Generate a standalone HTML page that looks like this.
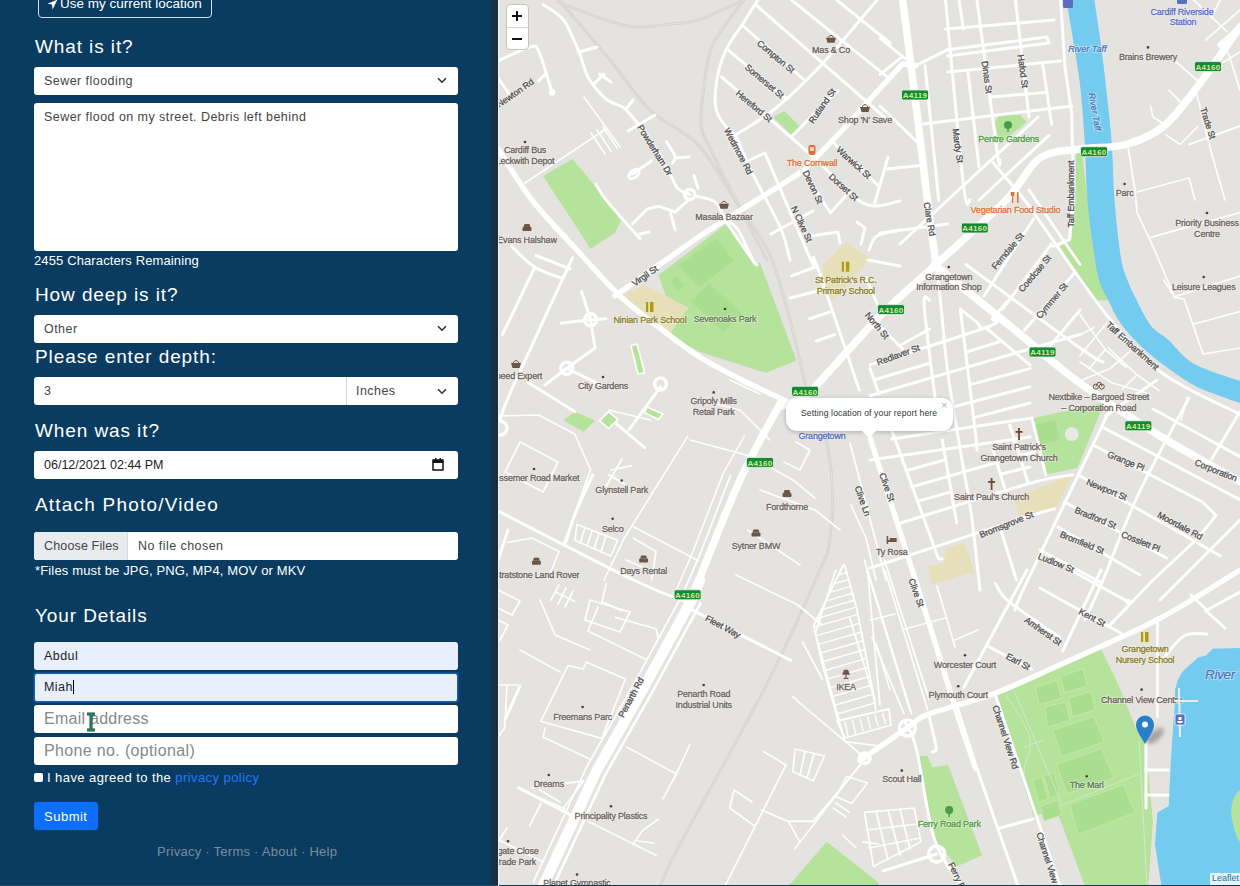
<!DOCTYPE html>
<html><head><meta charset="utf-8">
<style>
html,body{margin:0;padding:0;width:1240px;height:886px;overflow:hidden;background:#093c60;font-family:"Liberation Sans",sans-serif;}
#panel{position:absolute;left:0;top:0;width:490px;height:886px;background:#093c60;}
#shadow{position:absolute;left:489px;top:0;width:9px;height:886px;background:linear-gradient(to right,#0a3a5c,#12334c 35%,#1a2c3b);}
#bstrip{position:absolute;left:0;top:885px;width:498px;height:1px;background:#1f4a60;}
#wline{position:absolute;left:498px;top:0;width:1px;height:886px;background:#f4f4f4;}
.t{position:absolute;white-space:nowrap;line-height:1;}
.h{color:#fff;font-size:19px;letter-spacing:0.9px;}
.box{position:absolute;background:#fff;border-radius:3px;box-sizing:border-box;}
.ft{color:#444;font-size:12.5px;letter-spacing:0.45px;}
.chev{position:absolute;width:10px;height:7px;}
#map{position:absolute;left:499px;top:0;width:741px;height:886px;overflow:hidden;background:#e5e3e0;}
</style></head><body>
<div id="panel">
  <div class="box" style="left:38px;top:-4px;width:174px;height:22px;background:transparent;border:1.5px solid #cddff0;border-radius:4px;"></div>
  <svg style="position:absolute;left:47px;top:-1px" width="11" height="11" viewBox="0 0 11 11"><path d="M10.5 0.5 L0.5 4.8 L5 5.6 L5.6 10.5 Z" fill="#fff"/></svg>
  <div class="t" style="left:60px;top:-3px;color:#fff;font-size:13.5px;">Use my current location</div>

  <div class="t h" style="left:35px;top:37px;">What is it?</div>
  <div class="box" style="left:34px;top:67px;width:424px;height:28px;"></div>
  <div class="t ft" style="left:44px;top:75px;">Sewer flooding</div>
  <svg class="chev" style="left:437px;top:77px" viewBox="0 0 10 7"><path d="M1 1.2 L5 5.2 L9 1.2" fill="none" stroke="#333" stroke-width="1.6"/></svg>

  <div class="box" style="left:34px;top:103px;width:424px;height:148px;"></div>
  <div class="t ft" style="left:44px;top:111px;">Sewer flood on my street. Debris left behind</div>
  <div class="t" style="left:34px;top:254px;color:#fff;font-size:13px;letter-spacing:0.12px;">2455 Characters Remaining</div>

  <div class="t h" style="left:35px;top:285px;">How deep is it?</div>
  <div class="box" style="left:34px;top:315px;width:424px;height:28px;"></div>
  <div class="t ft" style="left:44px;top:323px;">Other</div>
  <svg class="chev" style="left:437px;top:325px" viewBox="0 0 10 7"><path d="M1 1.2 L5 5.2 L9 1.2" fill="none" stroke="#333" stroke-width="1.6"/></svg>

  <div class="t h" style="left:35px;top:347px;">Please enter depth:</div>
  <div class="box" style="left:34px;top:377px;width:424px;height:28px;"></div>
  <div style="position:absolute;left:346px;top:377px;width:1px;height:28px;background:#ced4da;"></div>
  <div class="t ft" style="left:44px;top:385px;">3</div>
  <div class="t ft" style="left:356px;top:385px;">Inches</div>
  <svg class="chev" style="left:437px;top:388px" viewBox="0 0 10 7"><path d="M1 1.2 L5 5.2 L9 1.2" fill="none" stroke="#333" stroke-width="1.6"/></svg>

  <div class="t h" style="left:35px;top:421px;">When was it?</div>
  <div class="box" style="left:34px;top:451px;width:424px;height:28px;"></div>
  <div class="t" style="left:44px;top:459px;color:#222;font-size:12.5px;">06/12/2021 02:44 PM</div>
  <svg style="position:absolute;left:432px;top:458px" width="12" height="13" viewBox="0 0 12 13"><rect x="1" y="2" width="10" height="10" fill="none" stroke="#111" stroke-width="1.5"/><rect x="1" y="2" width="10" height="3" fill="#111"/><rect x="3" y="0" width="1.5" height="3" fill="#111"/><rect x="7.5" y="0" width="1.5" height="3" fill="#111"/></svg>

  <div class="t h" style="left:35px;top:495px;letter-spacing:1.2px;">Attach Photo/Video</div>
  <div class="box" style="left:34px;top:532px;width:424px;height:28px;"></div>
  <div style="position:absolute;left:34px;top:532px;width:94px;height:28px;background:#e9ecef;border-radius:3px 0 0 3px;border-right:1px solid #d5d8dc;box-sizing:border-box;"></div>
  <div class="t ft" style="left:44px;top:540px;letter-spacing:0.15px;">Choose Files</div>
  <div class="t ft" style="left:138px;top:540px;">No file chosen</div>
  <div class="t" style="left:35px;top:564px;color:#fff;font-size:13px;letter-spacing:0.15px;">*Files must be JPG, PNG, MP4, MOV or MKV</div>

  <div class="t h" style="left:35px;top:606px;">Your Details</div>
  <div class="box" style="left:34px;top:642px;width:424px;height:28px;background:#e8f0fe;"></div>
  <div class="t ft" style="left:44px;top:650px;color:#222;">Abdul</div>
  <div class="box" style="left:34px;top:673px;width:424px;height:29px;background:#e8f0fe;border:1px solid #1d5aa0;box-shadow:0 0 0 1px #0d4f94;"></div>
  <div class="t ft" style="left:44px;top:681px;color:#222;">Miah</div>
  <div style="position:absolute;left:73px;top:680px;width:1px;height:14px;background:#000;"></div>
  <div class="box" style="left:34px;top:705px;width:424px;height:28px;"></div>
  <div class="t" style="left:44px;top:711px;color:#888;font-size:16px;letter-spacing:0.26px;">Email address</div>
  <div class="box" style="left:34px;top:737px;width:424px;height:28px;"></div>
  <div class="t" style="left:44px;top:743px;color:#888;font-size:16px;letter-spacing:0.35px;">Phone no. (optional)</div>
  <svg style="position:absolute;left:85px;top:712px" width="12" height="20" viewBox="0 0 12 20"><path d="M2 2 H10 M6 2 V18 M2 18 H10" stroke="#0b4d3b" stroke-width="3" fill="none"/><path d="M2 2 H10 M6 2 V18 M2 18 H10" stroke="#3fa07e" stroke-width="1" fill="none"/></svg>

  <div class="box" style="left:34px;top:773px;width:9px;height:9px;border-radius:2px;"></div>
  <div class="t" style="left:47px;top:771px;color:#fff;font-size:13px;letter-spacing:0.43px;">I have agreed to the <span style="color:#1f7bff">privacy policy</span></div>

  <div class="box" style="left:34px;top:802px;width:64px;height:28px;background:#0d6efd;border-radius:3px;"></div>
  <div class="t" style="left:44px;top:810px;color:#fff;font-size:13px;letter-spacing:0.5px;">Submit</div>

  <div class="t" style="left:157px;top:845px;color:#7d8b98;font-size:13px;letter-spacing:0.26px;">Privacy · Terms · About · Help</div>
</div>

<div id="shadow"></div>
<div id="wline"></div>
<div id="bstrip"></div>
<div id="map"><svg id="mapsvg" width="741" height="886" viewBox="499 0 741 886" style="position:absolute;left:0;top:0;font-family:'Liberation Sans',sans-serif"><rect x="499" y="0" width="741" height="886" fill="#e5e3e0"/><polygon points="543.0,176.0 572.5,159.0 606.0,199.0 621.0,221.0 615.0,233.0 590.6,248.7" fill="#b6e39b" />
<polygon points="563.5,420.6 574.7,411.6 595.0,420.6 583.8,432.0" fill="#b6e39b" />
<polygon points="599.6,420.6 608.6,411.6 617.6,419.5 608.6,428.5" fill="#b6e39b" stroke="#fff" stroke-width="1.6"/>
<polygon points="647.0,407.0 662.8,414.0 658.3,419.5 644.7,412.7" fill="#b6e39b" stroke="#fff" stroke-width="1.6"/>
<polygon points="631.0,345.7 637.0,344.0 644.7,372.8 638.0,374.0" fill="#b6e39b" stroke="#fff" stroke-width="1.6"/>
<polygon points="773.0,117.0 784.5,111.0 800.0,126.5 792.0,136.0" fill="#b6e39b" />
<polygon points="995.0,122.0 999.6,115.0 1020.0,115.0 1026.7,122.0 999.6,144.5" fill="#b6e39b" />
<polygon points="658.3,275.2 725.4,224.4 745.7,244.7 753.8,263.0 760.0,263.0 796.5,360.6 766.0,372.8 700.0,352.0 666.4,334.0 688.8,307.7 666.4,297.6" fill="#b6e39b" />
<polygon points="678.6,265.0 717.2,238.6 733.5,261.0 699.0,287.4" fill="#a9dd8f" />
<polygon points="690.8,301.6 709.0,283.3 741.6,313.8 723.3,332.0" fill="#a9dd8f" />
<polygon points="670.5,281.3 676.6,276.2 684.7,285.4 678.6,291.5" fill="#a9dd8f" />
<polygon points="1032.0,418.4 1104.5,402.6 1077.4,468.0 1045.8,474.8" fill="#b6e39b" />
<polygon points="1036.0,424.0 1055.0,420.0 1060.0,440.0 1040.0,444.0" fill="#a9dd8f" />
<circle cx="1071.7" cy="434" r="7" fill="#e8e8e6"/>
<polygon points="1074.0,190.0 1087.4,190.0 1099.0,280.0 1108.4,300.5 1094.0,300.6 1060.0,246.4 1071.6,239.7" fill="#b6e39b" />
<polygon points="1076.0,150.0 1082.0,150.0 1087.4,200.0 1076.0,200.0" fill="#b6e39b" />
<polygon points="995.4,694.0 1060.0,664.8 1101.0,649.0 1119.0,686.0 1137.0,731.0 1146.0,744.7 1153.0,821.4 1148.4,886.0 1085.0,886.0 1055.8,808.0 1033.8,817.0" fill="#b6e39b" />
<polygon points="1035.3,687.3 1056.6,680.6 1061.9,698.0 1039.3,704.6" fill="#a9dd8f" stroke="#c9e8a8" stroke-width="0.9"/>
<polygon points="1060.6,676.6 1083.2,668.6 1087.2,686.0 1064.5,692.6" fill="#a9dd8f" stroke="#c9e8a8" stroke-width="0.9"/>
<polygon points="1044.6,707.2 1065.9,702.0 1069.9,720.6 1047.2,727.2" fill="#a9dd8f" stroke="#c9e8a8" stroke-width="0.9"/>
<polygon points="1068.5,698.0 1091.2,691.3 1095.2,710.0 1072.5,716.6" fill="#a9dd8f" stroke="#c9e8a8" stroke-width="0.9"/>
<polygon points="1052.6,730.0 1093.8,716.6 1104.5,741.8 1061.9,756.5" fill="#a9dd8f" stroke="#c9e8a8" stroke-width="0.9"/>
<polygon points="1056.6,764.5 1101.8,748.5 1113.8,777.8 1067.2,793.8" fill="#a9dd8f" stroke="#c9e8a8" stroke-width="0.9"/>
<polygon points="1069.9,804.4 1123.1,784.5 1135.1,812.4 1077.9,835.0" fill="#a9dd8f" stroke="#c9e8a8" stroke-width="0.9"/>
<polygon points="1032.6,780.5 1042.0,777.0 1048.0,799.0 1038.6,802.0" fill="#a9dd8f" stroke="#c9e8a8" stroke-width="0.9"/>
<polygon points="1044.0,776.0 1053.9,772.5 1060.0,795.0 1050.0,798.0" fill="#a9dd8f" stroke="#c9e8a8" stroke-width="0.9"/>
<polygon points="1040.0,806.0 1058.0,800.0 1062.0,815.0 1044.0,821.0" fill="#a9dd8f" stroke="#c9e8a8" stroke-width="0.9"/>
<path d="M1014.0 690.0 L1062.0 805.0" fill="none" stroke="#d5e6cc" stroke-width="1.0" stroke-linecap="round" stroke-linejoin="round" />
<path d="M1006.0 695.0 C1010.0 702.2 1027.0 725.2 1030.0 738.0 C1033.0 750.8 1023.7 760.0 1024.0 772.0 C1024.3 784.0 1030.7 803.7 1032.0 810.0" fill="none" stroke="#d5e6cc" stroke-width="1.0" stroke-linecap="round" stroke-linejoin="round" />
<path d="M1062.0 805.0 L1139.0 774.0" fill="none" stroke="#d5e6cc" stroke-width="1.0" stroke-linecap="round" stroke-linejoin="round" />
<path d="M1139.0 741.0 L1147.0 886.0" fill="none" stroke="#d5e6cc" stroke-width="1.0" stroke-linecap="round" stroke-linejoin="round" />
<path d="M1024.0 747.0 L1044.0 740.0" fill="none" stroke="#d5e6cc" stroke-width="1.0" stroke-linecap="round" stroke-linejoin="round" />
<polygon points="1146.0,742.0 1168.7,742.0 1168.7,808.0 1157.4,812.4 1155.0,844.0 1160.0,886.0 1150.0,886.0 1153.0,821.0 1146.0,745.0" fill="#e5e3e0" />
<polygon points="916.4,756.0 927.7,756.0 932.0,767.3 948.0,765.0 982.0,855.3 957.0,866.6 934.5,839.5" fill="#b6e39b" />
<polygon points="826.7,841.8 878.6,882.4 878.0,886.0 788.4,886.0" fill="#b6e39b" />
<polygon points="620.0,296.0 644.7,284.8 687.6,307.4 669.6,334.5" fill="#e7dfb9" />
<polygon points="823.0,264.5 845.8,242.0 870.6,257.7 834.5,300.6 823.0,293.8" fill="#e7dfb9" />
<polygon points="1014.0,497.4 1072.9,474.8 1054.8,511.0 1018.7,515.4" fill="#e7dfb9" />
<polygon points="927.8,566.4 944.0,562.8 945.8,548.4 964.0,543.0 974.7,571.8 931.4,584.5" fill="#e7dfb9" />
<path d="M1094.0 -2.0 C1095.2 5.8 1098.7 27.7 1101.0 45.0 C1103.3 62.3 1105.9 84.6 1107.7 101.6 C1109.5 118.6 1110.9 130.6 1112.0 147.0 C1113.1 163.4 1113.0 181.6 1114.5 200.0 C1116.0 218.4 1118.8 244.4 1121.0 257.7 C1123.2 271.0 1125.0 273.4 1127.4 280.0 C1129.8 286.6 1131.4 289.8 1135.3 297.4 C1139.2 305.0 1145.5 318.7 1151.0 325.8 C1156.5 332.9 1161.4 333.7 1168.5 340.0 C1175.6 346.3 1181.8 356.9 1193.7 363.7 C1205.6 370.5 1230.6 377.6 1240.0 381.0 C1249.4 384.4 1248.3 383.5 1250.0 384.0 L1250 406 L1250.0 406.0 C1248.3 405.5 1248.6 406.1 1240.0 403.0 C1231.4 399.9 1210.4 393.1 1198.5 387.4 C1186.6 381.6 1177.8 375.1 1168.5 368.5 C1159.2 361.9 1150.9 355.4 1143.0 348.0 C1135.1 340.6 1126.8 331.9 1121.0 324.0 C1115.2 316.1 1112.1 307.8 1108.4 300.5 C1104.7 293.2 1101.6 289.1 1099.0 280.0 C1096.4 270.9 1094.9 259.3 1093.0 246.0 C1091.1 232.7 1088.7 216.5 1087.4 200.0 C1086.1 183.5 1086.1 165.3 1085.0 147.0 C1083.9 128.7 1082.4 107.0 1080.6 90.0 C1078.8 73.0 1076.4 60.3 1074.0 45.0 C1071.6 29.7 1067.3 5.8 1066.0 -2.0 Z" fill="#73cbf0"/>
<path d="M1250.0 648.0 L1240.0 648.1 L1212.8 648.8 L1206.0 655.6 L1198.0 657.6 L1182.4 671.8 L1177.6 680.6 L1175.0 690.0 L1175.0 701.0 L1173.0 728.0 L1171.0 758.0 L1168.7 806.0 L1157.4 812.4 L1155.0 844.0 L1162.0 890.0 L1250 890 Z" fill="#73cbf0"/>
<path d="M1240 790 C1232 796 1229 810 1233 824 C1235 834 1238 840 1240 842 Z" fill="#b6e39b"/>
<path d="M559.0 0.0 C567.5 10.0 594.8 41.7 610.0 60.0 C625.2 78.3 635.3 95.9 650.0 110.0 C664.7 124.1 683.8 129.5 698.0 144.5 C712.2 159.5 723.2 181.9 735.0 200.0 C746.8 218.1 759.8 233.0 769.0 253.0 C778.2 273.0 783.7 297.2 790.0 320.0 C796.3 342.8 801.2 370.7 807.0 390.0 C812.8 409.3 820.8 420.7 825.0 436.0 C829.2 451.3 831.2 464.6 832.0 481.6 C832.8 498.6 832.0 523.3 830.0 538.0 C828.0 552.7 830.7 545.3 820.0 570.0 C809.3 594.7 789.1 640.3 765.8 686.0 C742.5 731.7 697.6 810.7 680.0 844.0 C662.4 877.3 663.3 879.0 660.0 886.0" fill="none" stroke="#d3d1cd" stroke-width="2.8" stroke-linecap="round" stroke-linejoin="round" />
<path d="M559.0 0.0 C567.5 10.0 594.8 41.7 610.0 60.0 C625.2 78.3 635.3 95.9 650.0 110.0 C664.7 124.1 683.8 129.5 698.0 144.5 C712.2 159.5 723.2 181.9 735.0 200.0 C746.8 218.1 759.8 233.0 769.0 253.0 C778.2 273.0 783.7 297.2 790.0 320.0 C796.3 342.8 801.2 370.7 807.0 390.0 C812.8 409.3 820.8 420.7 825.0 436.0 C829.2 451.3 831.2 464.6 832.0 481.6 C832.8 498.6 832.0 523.3 830.0 538.0 C828.0 552.7 830.7 545.3 820.0 570.0 C809.3 594.7 789.1 640.3 765.8 686.0 C742.5 731.7 697.6 810.7 680.0 844.0 C662.4 877.3 663.3 879.0 660.0 886.0" fill="none" stroke="#e5e3e0" stroke-width="1.0" stroke-linecap="round" stroke-linejoin="round" />
<path d="M744.0 0.0 C738.8 7.5 719.4 30.0 712.6 45.0 C705.9 60.0 705.4 76.5 703.5 90.0 C701.6 103.5 700.0 116.4 701.0 126.0 C702.0 135.6 703.4 134.4 709.6 147.6 C715.8 160.8 728.8 186.3 738.4 205.0 C748.0 223.7 762.2 250.8 767.0 260.0" fill="none" stroke="#d3d1cd" stroke-width="2.8" stroke-linecap="round" stroke-linejoin="round" />
<path d="M744.0 0.0 C738.8 7.5 719.4 30.0 712.6 45.0 C705.9 60.0 705.4 76.5 703.5 90.0 C701.6 103.5 700.0 116.4 701.0 126.0 C702.0 135.6 703.4 134.4 709.6 147.6 C715.8 160.8 728.8 186.3 738.4 205.0 C748.0 223.7 762.2 250.8 767.0 260.0" fill="none" stroke="#e5e3e0" stroke-width="1.0" stroke-linecap="round" stroke-linejoin="round" />
<path d="M558.0 2.0 C565.0 4.7 587.4 13.8 600.0 18.0 C612.6 22.2 621.8 26.0 633.5 27.0 C645.2 28.0 659.2 25.2 670.0 24.0 C680.8 22.8 685.7 24.0 698.0 20.0 C710.3 16.0 736.3 3.3 744.0 0.0" fill="none" stroke="#d3d1cd" stroke-width="2.8" stroke-linecap="round" stroke-linejoin="round" />
<path d="M558.0 2.0 C565.0 4.7 587.4 13.8 600.0 18.0 C612.6 22.2 621.8 26.0 633.5 27.0 C645.2 28.0 659.2 25.2 670.0 24.0 C680.8 22.8 685.7 24.0 698.0 20.0 C710.3 16.0 736.3 3.3 744.0 0.0" fill="none" stroke="#e5e3e0" stroke-width="1.0" stroke-linecap="round" stroke-linejoin="round" />
<polyline points="584.0,97.0 620.0,147.0" fill="none" stroke="#fff" stroke-width="1.7" stroke-linecap="round" stroke-linejoin="round" />
<polyline points="591.0,133.0 605.0,154.0" fill="none" stroke="#fff" stroke-width="1.7" stroke-linecap="round" stroke-linejoin="round" />
<polyline points="597.0,130.0 611.0,151.0" fill="none" stroke="#fff" stroke-width="1.7" stroke-linecap="round" stroke-linejoin="round" />
<polyline points="603.0,127.0 617.0,148.0" fill="none" stroke="#fff" stroke-width="1.7" stroke-linecap="round" stroke-linejoin="round" />
<polyline points="525.0,183.0 606.0,129.0" fill="none" stroke="#fff" stroke-width="1.7" stroke-linecap="round" stroke-linejoin="round" />
<polyline points="498.0,416.0 538.6,415.0 574.7,434.0 590.6,470.0 565.7,538.0 563.5,542.5" fill="none" stroke="#fff" stroke-width="1.7" stroke-linecap="round" stroke-linejoin="round" />
<polyline points="687.6,436.4 624.4,538.0 604.0,580.0" fill="none" stroke="#fff" stroke-width="1.7" stroke-linecap="round" stroke-linejoin="round" />
<polyline points="520.0,442.0 558.0,462.0 543.0,492.0 505.0,472.0 520.0,442.0" fill="none" stroke="#fff" stroke-width="1.7" stroke-linecap="round" stroke-linejoin="round" />
<polyline points="567.9,665.6 583.0,669.0 586.5,662.2 625.5,679.0 601.8,738.4 540.9,721.2 567.9,665.6" fill="none" stroke="#fff" stroke-width="1.7" stroke-linecap="round" stroke-linejoin="round" />
<polyline points="590.0,600.0 630.0,612.0 620.0,632.0 585.0,620.0 590.0,600.0" fill="none" stroke="#fff" stroke-width="1.7" stroke-linecap="round" stroke-linejoin="round" />
<polyline points="598.0,607.0 588.0,631.0 645.0,659.0" fill="none" stroke="#fff" stroke-width="1.7" stroke-linecap="round" stroke-linejoin="round" />
<polyline points="793.0,697.0 806.4,708.6 865.0,758.0" fill="none" stroke="#fff" stroke-width="1.7" stroke-linecap="round" stroke-linejoin="round" />
<polyline points="763.5,751.5 786.0,765.0 725.0,886.0" fill="none" stroke="#fff" stroke-width="1.7" stroke-linecap="round" stroke-linejoin="round" />
<polyline points="865.0,758.2 795.0,848.5" fill="none" stroke="#fff" stroke-width="1.7" stroke-linecap="round" stroke-linejoin="round" />
<polyline points="730.0,380.0 760.0,394.0" fill="none" stroke="#fff" stroke-width="1.7" stroke-linecap="round" stroke-linejoin="round" />
<polyline points="690.0,440.0 750.0,456.0 793.0,480.0 815.0,498.0" fill="none" stroke="#fff" stroke-width="1.7" stroke-linecap="round" stroke-linejoin="round" />
<polyline points="700.0,400.0 740.0,410.0 770.0,440.0" fill="none" stroke="#fff" stroke-width="1.7" stroke-linecap="round" stroke-linejoin="round" />
<polyline points="760.0,490.0 815.0,510.0 840.0,530.0" fill="none" stroke="#fff" stroke-width="1.7" stroke-linecap="round" stroke-linejoin="round" />
<polyline points="748.0,530.0 800.0,565.0" fill="none" stroke="#fff" stroke-width="1.7" stroke-linecap="round" stroke-linejoin="round" />
<polyline points="850.0,443.0 886.0,580.0" fill="none" stroke="#fff" stroke-width="1.7" stroke-linecap="round" stroke-linejoin="round" />
<polyline points="851.0,505.0 866.0,538.0 876.0,580.0" fill="none" stroke="#fff" stroke-width="1.7" stroke-linecap="round" stroke-linejoin="round" />
<polyline points="866.8,570.0 909.7,710.0" fill="none" stroke="#fff" stroke-width="1.7" stroke-linecap="round" stroke-linejoin="round" />
<polyline points="884.8,570.0 927.7,710.0" fill="none" stroke="#fff" stroke-width="1.7" stroke-linecap="round" stroke-linejoin="round" />
<polyline points="905.0,629.0 945.0,618.0" fill="none" stroke="#fff" stroke-width="1.7" stroke-linecap="round" stroke-linejoin="round" />
<polyline points="937.0,586.0 955.0,647.0" fill="none" stroke="#fff" stroke-width="1.7" stroke-linecap="round" stroke-linejoin="round" />
<polyline points="955.0,640.0 978.0,630.0" fill="none" stroke="#fff" stroke-width="1.7" stroke-linecap="round" stroke-linejoin="round" />
<polyline points="835.8,570.0 815.4,633.0 844.8,741.6 880.0,746.0" fill="none" stroke="#fff" stroke-width="1.7" stroke-linecap="round" stroke-linejoin="round" />
<polyline points="867.4,570.0 880.0,705.0" fill="none" stroke="#fff" stroke-width="1.7" stroke-linecap="round" stroke-linejoin="round" />
<polyline points="1163.7,280.0 1174.8,297.4 1184.0,299.0 1203.0,354.0 1240.0,348.0" fill="none" stroke="#fff" stroke-width="1.7" stroke-linecap="round" stroke-linejoin="round" />
<polyline points="1174.0,297.0 1240.0,276.0" fill="none" stroke="#fff" stroke-width="1.7" stroke-linecap="round" stroke-linejoin="round" />
<polyline points="1193.7,324.0 1240.0,311.6" fill="none" stroke="#fff" stroke-width="1.7" stroke-linecap="round" stroke-linejoin="round" />
<polyline points="1128.0,147.0 1135.0,190.0 1137.0,212.6 1153.0,246.4 1175.0,298.0" fill="none" stroke="#fff" stroke-width="1.7" stroke-linecap="round" stroke-linejoin="round" />
<polyline points="1150.6,237.4 1240.0,212.6" fill="none" stroke="#fff" stroke-width="1.7" stroke-linecap="round" stroke-linejoin="round" />
<polyline points="1189.0,144.5 1240.0,126.0" fill="none" stroke="#fff" stroke-width="1.7" stroke-linecap="round" stroke-linejoin="round" />
<polyline points="1137.0,192.0 1189.0,178.0 1195.0,200.0" fill="none" stroke="#fff" stroke-width="1.7" stroke-linecap="round" stroke-linejoin="round" />
<polyline points="1195.7,90.0 1211.6,153.5 1225.0,200.0" fill="none" stroke="#fff" stroke-width="1.7" stroke-linecap="round" stroke-linejoin="round" />
<polyline points="1040.0,-2.0 1040.0,0.0" fill="none" stroke="#fff" stroke-width="1.7" stroke-linecap="round" stroke-linejoin="round" />
<polyline points="609.0,410.0 650.0,420.0" fill="none" stroke="#fff" stroke-width="1.7" stroke-linecap="round" stroke-linejoin="round" />
<polyline points="736.0,575.0 798.0,605.0 822.0,625.0" fill="none" stroke="#fff" stroke-width="1.7" stroke-linecap="round" stroke-linejoin="round" />
<polyline points="870.0,620.0 895.0,614.0" fill="none" stroke="#fff" stroke-width="1.7" stroke-linecap="round" stroke-linejoin="round" />
<polyline points="633.4,526.7 698.0,560.6" fill="none" stroke="#fff" stroke-width="1.7" stroke-linecap="round" stroke-linejoin="round" />
<polyline points="577.0,524.5 617.6,540.3 610.9,556.0 574.7,540.3 577.0,524.5" fill="none" stroke="#fff" stroke-width="1.7" stroke-linecap="round" stroke-linejoin="round" />
<polyline points="585.0,528.0 580.0,543.0" fill="none" stroke="#fff" stroke-width="1.7" stroke-linecap="round" stroke-linejoin="round" />
<polyline points="592.0,531.0 587.0,546.0" fill="none" stroke="#fff" stroke-width="1.7" stroke-linecap="round" stroke-linejoin="round" />
<polyline points="599.0,533.0 594.0,549.0" fill="none" stroke="#fff" stroke-width="1.7" stroke-linecap="round" stroke-linejoin="round" />
<polyline points="606.0,536.0 601.0,552.0" fill="none" stroke="#fff" stroke-width="1.7" stroke-linecap="round" stroke-linejoin="round" />
<polyline points="622.0,459.0 606.4,486.0" fill="none" stroke="#fff" stroke-width="1.7" stroke-linecap="round" stroke-linejoin="round" />
<polyline points="610.9,470.0 631.0,465.8" fill="none" stroke="#fff" stroke-width="1.7" stroke-linecap="round" stroke-linejoin="round" />
<polyline points="608.6,474.8 624.4,483.8" fill="none" stroke="#fff" stroke-width="1.7" stroke-linecap="round" stroke-linejoin="round" />
<polyline points="507.0,542.5 531.9,538.0 559.0,551.6 547.7,580.0" fill="none" stroke="#fff" stroke-width="1.7" stroke-linecap="round" stroke-linejoin="round" />
<polyline points="633.4,538.0 656.0,551.6 651.5,580.0" fill="none" stroke="#fff" stroke-width="1.7" stroke-linecap="round" stroke-linejoin="round" />
<polyline points="626.0,560.0 642.0,567.0" fill="none" stroke="#fff" stroke-width="1.7" stroke-linecap="round" stroke-linejoin="round" />
<polyline points="606.4,583.5 601.8,601.6 622.0,610.6" fill="none" stroke="#fff" stroke-width="1.7" stroke-linecap="round" stroke-linejoin="round" />
<polyline points="615.4,617.4 656.0,628.7 658.3,637.7" fill="none" stroke="#fff" stroke-width="1.7" stroke-linecap="round" stroke-linejoin="round" />
<polyline points="545.4,728.0 543.0,737.0 590.6,759.6" fill="none" stroke="#fff" stroke-width="1.7" stroke-linecap="round" stroke-linejoin="round" />
<polyline points="498.0,685.0 518.3,685.0" fill="none" stroke="#fff" stroke-width="1.7" stroke-linecap="round" stroke-linejoin="round" />
<polyline points="507.0,685.0 504.8,728.0 498.0,737.0" fill="none" stroke="#fff" stroke-width="1.7" stroke-linecap="round" stroke-linejoin="round" />
<polyline points="556.7,592.6 574.7,601.6" fill="none" stroke="#fff" stroke-width="1.7" stroke-linecap="round" stroke-linejoin="round" />
<polyline points="559.0,585.0 551.0,600.0" fill="none" stroke="#fff" stroke-width="1.7" stroke-linecap="round" stroke-linejoin="round" />
<polyline points="566.0,588.0 558.0,604.0" fill="none" stroke="#fff" stroke-width="1.7" stroke-linecap="round" stroke-linejoin="round" />
<polyline points="573.0,591.0 565.0,607.0" fill="none" stroke="#fff" stroke-width="1.7" stroke-linecap="round" stroke-linejoin="round" />
<polyline points="498.0,590.0 520.0,601.0 512.0,615.0 498.0,608.0" fill="none" stroke="#fff" stroke-width="1.7" stroke-linecap="round" stroke-linejoin="round" />
<polyline points="498.0,620.0 508.0,625.0 500.0,640.0" fill="none" stroke="#fff" stroke-width="1.7" stroke-linecap="round" stroke-linejoin="round" />
<polyline points="531.9,787.6 583.8,780.8 563.5,808.0" fill="none" stroke="#fff" stroke-width="1.7" stroke-linecap="round" stroke-linejoin="round" />
<polyline points="540.0,790.0 560.0,802.0" fill="none" stroke="#fff" stroke-width="1.7" stroke-linecap="round" stroke-linejoin="round" />
<polyline points="538.0,797.0 565.0,809.0" fill="none" stroke="#fff" stroke-width="1.7" stroke-linecap="round" stroke-linejoin="round" />
<polyline points="540.9,803.4 529.6,826.0" fill="none" stroke="#fff" stroke-width="1.7" stroke-linecap="round" stroke-linejoin="round" />
<polyline points="626.7,747.0 676.3,774.0 689.9,744.7" fill="none" stroke="#fff" stroke-width="1.7" stroke-linecap="round" stroke-linejoin="round" />
<polyline points="676.3,774.0 662.8,798.9" fill="none" stroke="#fff" stroke-width="1.7" stroke-linecap="round" stroke-linejoin="round" />
<polyline points="588.3,821.4 656.0,855.3" fill="none" stroke="#fff" stroke-width="1.7" stroke-linecap="round" stroke-linejoin="round" />
<polyline points="633.4,844.0 642.5,830.5 658.3,819.2" fill="none" stroke="#fff" stroke-width="1.7" stroke-linecap="round" stroke-linejoin="round" />
<polyline points="638.0,841.0 654.0,843.0" fill="none" stroke="#fff" stroke-width="1.7" stroke-linecap="round" stroke-linejoin="round" />
<polyline points="498.0,839.5 543.0,862.0" fill="none" stroke="#fff" stroke-width="1.7" stroke-linecap="round" stroke-linejoin="round" />
<polyline points="507.0,828.0 498.0,842.0" fill="none" stroke="#fff" stroke-width="1.7" stroke-linecap="round" stroke-linejoin="round" />
<polyline points="795.0,749.0 824.5,756.0 813.2,780.8 792.9,771.8 795.0,749.0" fill="none" stroke="#fff" stroke-width="1.7" stroke-linecap="round" stroke-linejoin="round" />
<polyline points="805.0,752.0 800.0,775.0" fill="none" stroke="#fff" stroke-width="1.7" stroke-linecap="round" stroke-linejoin="round" />
<polyline points="814.0,754.0 807.0,778.0" fill="none" stroke="#fff" stroke-width="1.7" stroke-linecap="round" stroke-linejoin="round" />
<polyline points="734.0,790.0 752.0,802.0" fill="none" stroke="#fff" stroke-width="1.7" stroke-linecap="round" stroke-linejoin="round" />
<polyline points="734.0,791.0 729.7,808.0 754.5,826.0" fill="none" stroke="#fff" stroke-width="1.7" stroke-linecap="round" stroke-linejoin="round" />
<polyline points="761.3,810.0 788.4,821.4 813.2,821.4 860.6,765.0" fill="none" stroke="#fff" stroke-width="1.7" stroke-linecap="round" stroke-linejoin="round" />
<polyline points="788.4,821.4 799.6,841.7" fill="none" stroke="#fff" stroke-width="1.7" stroke-linecap="round" stroke-linejoin="round" />
<polyline points="847.0,776.3 867.4,783.0 851.6,803.4 835.8,796.6 847.0,776.3" fill="none" stroke="#fff" stroke-width="1.7" stroke-linecap="round" stroke-linejoin="round" />
<polyline points="835.8,803.0 849.0,812.0" fill="none" stroke="#fff" stroke-width="1.7" stroke-linecap="round" stroke-linejoin="round" />
<polyline points="833.0,808.0 846.0,817.0" fill="none" stroke="#fff" stroke-width="1.7" stroke-linecap="round" stroke-linejoin="round" />
<polyline points="842.6,835.0 856.0,848.0" fill="none" stroke="#fff" stroke-width="1.7" stroke-linecap="round" stroke-linejoin="round" />
<polyline points="862.8,841.8 878.6,844.0" fill="none" stroke="#fff" stroke-width="1.7" stroke-linecap="round" stroke-linejoin="round" />
<polyline points="540.0,600.0 555.0,635.0 590.0,650.0" fill="none" stroke="#fff" stroke-width="1.7" stroke-linecap="round" stroke-linejoin="round" />
<polyline points="864.5,812.4 914.0,808.0 921.0,841.7 873.5,866.6 864.5,812.4" fill="none" stroke="#fff" stroke-width="1.7" stroke-linecap="round" stroke-linejoin="round" />
<polyline points="876.0,811.0 888.0,860.0" fill="none" stroke="#fff" stroke-width="1.7" stroke-linecap="round" stroke-linejoin="round" />
<polyline points="888.0,810.0 900.0,855.0" fill="none" stroke="#fff" stroke-width="1.7" stroke-linecap="round" stroke-linejoin="round" />
<polyline points="900.0,809.0 910.0,849.0" fill="none" stroke="#fff" stroke-width="1.7" stroke-linecap="round" stroke-linejoin="round" />
<polyline points="866.0,830.0 918.0,824.0" fill="none" stroke="#fff" stroke-width="1.7" stroke-linecap="round" stroke-linejoin="round" />
<polyline points="869.0,848.0 920.0,838.0" fill="none" stroke="#fff" stroke-width="1.7" stroke-linecap="round" stroke-linejoin="round" />
<polyline points="520.0,650.0 560.0,672.0" fill="none" stroke="#fff" stroke-width="1.7" stroke-linecap="round" stroke-linejoin="round" />
<polyline points="796.0,442.0 810.0,450.0 800.0,470.0 784.0,462.0" fill="none" stroke="#fff" stroke-width="1.7" stroke-linecap="round" stroke-linejoin="round" />
<polyline points="1175.0,61.0 1198.0,81.0" fill="none" stroke="#fff" stroke-width="1.7" stroke-linecap="round" stroke-linejoin="round" />
<polyline points="1080.0,314.8 1105.3,349.5 1125.8,367.0" fill="none" stroke="#fff" stroke-width="1.7" stroke-linecap="round" stroke-linejoin="round" />
<polyline points="1080.0,335.0 1094.0,327.4" fill="none" stroke="#fff" stroke-width="1.7" stroke-linecap="round" stroke-linejoin="round" />
<polyline points="1080.0,355.8 1106.9,322.7" fill="none" stroke="#fff" stroke-width="1.7" stroke-linecap="round" stroke-linejoin="round" />
<polyline points="1089.5,368.5 1105.3,349.5" fill="none" stroke="#fff" stroke-width="1.7" stroke-linecap="round" stroke-linejoin="round" />
<polyline points="1108.4,348.0 1136.9,374.8 1159.0,390.6" fill="none" stroke="#fff" stroke-width="1.7" stroke-linecap="round" stroke-linejoin="round" />
<polyline points="1080.0,381.0 1110.0,368.5 1130.6,351.0" fill="none" stroke="#fff" stroke-width="1.7" stroke-linecap="round" stroke-linejoin="round" />
<polyline points="1080.0,362.0 1111.6,382.7 1149.5,393.7" fill="none" stroke="#fff" stroke-width="1.7" stroke-linecap="round" stroke-linejoin="round" />
<polyline points="1122.7,389.0 1136.9,374.8" fill="none" stroke="#fff" stroke-width="1.7" stroke-linecap="round" stroke-linejoin="round" />
<polyline points="1187.4,397.0 1181.0,420.0" fill="none" stroke="#fff" stroke-width="1.7" stroke-linecap="round" stroke-linejoin="round" />
<polyline points="1168.7,90.0 1180.0,101.6" fill="none" stroke="#fff" stroke-width="1.7" stroke-linecap="round" stroke-linejoin="round" />
<polyline points="1150.6,106.0 1153.0,117.0 1164.0,124.0" fill="none" stroke="#fff" stroke-width="1.7" stroke-linecap="round" stroke-linejoin="round" />
<polyline points="1193.5,0.0 1227.0,31.6" fill="none" stroke="#fff" stroke-width="1.7" stroke-linecap="round" stroke-linejoin="round" />
<polyline points="1211.6,18.0 1220.0,0.0" fill="none" stroke="#fff" stroke-width="1.7" stroke-linecap="round" stroke-linejoin="round" />
<polyline points="1205.7,40.0 1240.0,10.0" fill="none" stroke="#fff" stroke-width="1.7" stroke-linecap="round" stroke-linejoin="round" />
<polyline points="1228.0,52.0 1240.0,90.0" fill="none" stroke="#fff" stroke-width="1.7" stroke-linecap="round" stroke-linejoin="round" />
<polyline points="1214.0,68.0 1240.0,52.0" fill="none" stroke="#fff" stroke-width="1.7" stroke-linecap="round" stroke-linejoin="round" />
<polyline points="1166.4,135.0 1180.0,144.5 1198.0,126.4" fill="none" stroke="#fff" stroke-width="1.7" stroke-linecap="round" stroke-linejoin="round" />
<polyline points="1189.0,144.5 1240.0,126.0" fill="none" stroke="#fff" stroke-width="1.7" stroke-linecap="round" stroke-linejoin="round" />
<path d="M890.0 425.0 L895.3 440.0 L938.6 559.0 L942.2 559.0" fill="none" stroke="#fff" stroke-width="3.0" stroke-linecap="round" stroke-linejoin="round" />
<polyline points="942.2,440.0 956.7,523.0" fill="none" stroke="#fff" stroke-width="3.0" stroke-linecap="round" stroke-linejoin="round" />
<polyline points="993.0,450.0 1005.4,490.6" fill="none" stroke="#fff" stroke-width="3.0" stroke-linecap="round" stroke-linejoin="round" />
<polyline points="906.0,470.7 944.0,460.0" fill="none" stroke="#fff" stroke-width="3.0" stroke-linecap="round" stroke-linejoin="round" />
<path d="M911.5 487.0 C925.1 483.1 972.6 469.3 993.0 463.5 C1013.4 457.7 1027.2 453.9 1034.0 452.0" fill="none" stroke="#fff" stroke-width="3.0" stroke-linecap="round" stroke-linejoin="round" />
<polyline points="917.0,501.4 949.5,492.4" fill="none" stroke="#fff" stroke-width="3.0" stroke-linecap="round" stroke-linejoin="round" />
<path d="M900.7 523.0 C922.2 516.4 1001.3 491.3 1030.0 483.3 C1058.7 475.3 1065.8 476.2 1072.9 474.8" fill="none" stroke="#fff" stroke-width="3.0" stroke-linecap="round" stroke-linejoin="round" />
<path d="M870.0 568.0 C896.7 559.3 999.2 525.9 1030.0 516.0 C1060.8 506.1 1050.7 509.9 1054.8 508.7" fill="none" stroke="#fff" stroke-width="3.0" stroke-linecap="round" stroke-linejoin="round" />
<polyline points="1000.0,474.3 1030.0,467.0" fill="none" stroke="#fff" stroke-width="3.0" stroke-linecap="round" stroke-linejoin="round" />
<path d="M936.0 264.5 C936.7 270.4 938.4 282.1 940.4 300.0 C942.4 317.9 944.1 345.3 947.7 372.0 C951.3 398.7 958.1 436.7 962.0 460.0 C965.9 483.3 968.0 490.3 971.0 512.0 C974.0 533.7 978.5 577.0 980.0 590.0" fill="none" stroke="#fff" stroke-width="3.0" stroke-linecap="round" stroke-linejoin="round" />
<path d="M929.6 300.0 C928.7 300.9 923.3 289.1 924.2 305.4 C925.1 321.6 932.4 376.7 935.0 397.5 C937.6 418.3 939.2 424.6 940.0 430.0" fill="none" stroke="#fff" stroke-width="3.0" stroke-linecap="round" stroke-linejoin="round" />
<path d="M960.3 309.0 C961.8 320.8 966.4 358.8 969.0 380.0 C971.6 401.2 974.5 424.7 975.8 436.4 C977.1 448.1 976.8 447.7 977.0 450.0" fill="none" stroke="#fff" stroke-width="3.0" stroke-linecap="round" stroke-linejoin="round" />
<path d="M960.3 309.0 C963.2 311.4 974.7 320.2 978.0 323.5 C981.3 326.8 979.7 328.1 980.0 329.0" fill="none" stroke="#fff" stroke-width="3.0" stroke-linecap="round" stroke-linejoin="round" />
<polyline points="870.0,368.6 879.0,394.0" fill="none" stroke="#fff" stroke-width="3.0" stroke-linecap="round" stroke-linejoin="round" />
<path d="M870.0 365.0 C889.6 358.7 966.9 334.8 987.4 327.0 C1007.9 319.2 989.5 322.2 992.8 318.0 C996.1 313.8 1004.6 304.5 1007.0 301.8" fill="none" stroke="#fff" stroke-width="3.0" stroke-linecap="round" stroke-linejoin="round" />
<polyline points="875.4,379.5 929.6,363.2" fill="none" stroke="#fff" stroke-width="3.0" stroke-linecap="round" stroke-linejoin="round" />
<path d="M870.0 395.7 C896.7 387.9 995.0 359.0 1030.0 348.8 C1065.0 338.6 1071.7 336.9 1080.0 334.5" fill="none" stroke="#fff" stroke-width="3.0" stroke-linecap="round" stroke-linejoin="round" />
<polyline points="965.7,352.4 1000.0,341.5" fill="none" stroke="#fff" stroke-width="3.0" stroke-linecap="round" stroke-linejoin="round" />
<polyline points="969.3,384.9 1030.0,368.6" fill="none" stroke="#fff" stroke-width="3.0" stroke-linecap="round" stroke-linejoin="round" />
<polyline points="954.9,406.5 1030.0,386.7" fill="none" stroke="#fff" stroke-width="3.0" stroke-linecap="round" stroke-linejoin="round" />
<polyline points="974.7,417.4 1030.0,403.0" fill="none" stroke="#fff" stroke-width="3.0" stroke-linecap="round" stroke-linejoin="round" />
<polyline points="891.7,439.0 1032.0,418.0" fill="none" stroke="#fff" stroke-width="3.0" stroke-linecap="round" stroke-linejoin="round" />
<polyline points="870.0,460.0 1030.0,437.0" fill="none" stroke="#fff" stroke-width="3.0" stroke-linecap="round" stroke-linejoin="round" />
<polyline points="987.4,329.0 1030.0,365.0" fill="none" stroke="#fff" stroke-width="3.0" stroke-linecap="round" stroke-linejoin="round" />
<polyline points="900.7,345.0 929.6,329.0" fill="none" stroke="#fff" stroke-width="3.0" stroke-linecap="round" stroke-linejoin="round" />
<polyline points="877.0,323.5 902.5,348.8" fill="none" stroke="#fff" stroke-width="3.0" stroke-linecap="round" stroke-linejoin="round" />
<polyline points="689.0,608.4 790.6,660.3" fill="none" stroke="#fff" stroke-width="3.0" stroke-linecap="round" stroke-linejoin="round" />
<path d="M543.0 4.5 C546.4 7.1 557.5 12.1 563.5 20.0 C569.5 27.9 574.9 42.5 579.0 52.0 C583.1 61.5 583.5 69.2 588.0 77.0 C592.5 84.8 600.0 93.8 606.0 99.0 C612.0 104.2 618.7 103.8 624.0 108.0 C629.3 112.2 632.7 117.2 638.0 124.0 C643.3 130.8 650.5 140.4 656.0 149.0 C661.5 157.6 667.0 168.9 670.7 175.5 C674.4 182.1 674.8 185.5 678.0 188.7 C681.2 191.9 687.8 193.5 689.8 194.5" fill="none" stroke="#fff" stroke-width="3.0" stroke-linecap="round" stroke-linejoin="round" />
<polyline points="579.0,52.0 597.0,47.0" fill="none" stroke="#fff" stroke-width="3.0" stroke-linecap="round" stroke-linejoin="round" />
<polyline points="595.0,83.0 604.0,74.0" fill="none" stroke="#fff" stroke-width="3.0" stroke-linecap="round" stroke-linejoin="round" />
<polyline points="600.0,74.0 611.0,82.0" fill="none" stroke="#fff" stroke-width="3.0" stroke-linecap="round" stroke-linejoin="round" />
<polyline points="627.0,108.0 633.0,100.0" fill="none" stroke="#fff" stroke-width="3.0" stroke-linecap="round" stroke-linejoin="round" />
<polyline points="628.0,131.0 655.0,115.0" fill="none" stroke="#fff" stroke-width="3.0" stroke-linecap="round" stroke-linejoin="round" />
<path d="M498.0 61.0 C503.3 58.7 523.2 48.5 530.0 47.0 C536.8 45.5 535.3 44.4 539.0 52.0 C542.7 59.6 549.8 85.8 552.0 92.5" fill="none" stroke="#fff" stroke-width="3.0" stroke-linecap="round" stroke-linejoin="round" />
<polyline points="538.6,81.0 545.0,74.5" fill="none" stroke="#fff" stroke-width="3.0" stroke-linecap="round" stroke-linejoin="round" />
<polyline points="498.0,78.0 510.0,95.0" fill="none" stroke="#fff" stroke-width="3.0" stroke-linecap="round" stroke-linejoin="round" />
<path d="M695.6 196.0 C698.8 197.0 709.8 198.2 714.7 201.9 C719.6 205.6 721.1 213.4 725.0 218.0 C728.9 222.6 733.4 222.7 738.0 229.7 C742.6 236.7 749.6 254.1 752.8 260.0 C756.0 265.9 756.3 264.2 757.0 265.0" fill="none" stroke="#fff" stroke-width="3.0" stroke-linecap="round" stroke-linejoin="round" />
<path d="M688.3 200.4 L675.0 212.0 L659.0 206.3 L647.2 209.0 L632.5 223.9" fill="none" stroke="#fff" stroke-width="3.0" stroke-linecap="round" stroke-linejoin="round" />
<polyline points="670.7,213.6 675.0,229.7" fill="none" stroke="#fff" stroke-width="3.0" stroke-linecap="round" stroke-linejoin="round" />
<polyline points="694.0,175.5 698.0,188.0" fill="none" stroke="#fff" stroke-width="3.0" stroke-linecap="round" stroke-linejoin="round" />
<path d="M595.9 184.3 C597.9 187.2 600.2 192.9 607.6 201.9 C615.0 210.9 634.6 232.4 640.0 238.5" fill="none" stroke="#fff" stroke-width="3.0" stroke-linecap="round" stroke-linejoin="round" />
<polyline points="640.0,234.0 649.0,232.0" fill="none" stroke="#fff" stroke-width="3.0" stroke-linecap="round" stroke-linejoin="round" />
<polyline points="651.6,160.8 632.5,174.0" fill="none" stroke="#fff" stroke-width="3.0" stroke-linecap="round" stroke-linejoin="round" />
<path d="M666.3 141.7 C667.8 144.1 674.0 152.7 675.0 156.4 C676.0 160.1 672.5 162.5 672.0 163.7" fill="none" stroke="#fff" stroke-width="3.0" stroke-linecap="round" stroke-linejoin="round" />
<polyline points="675.0,158.0 689.0,157.0" fill="none" stroke="#fff" stroke-width="3.0" stroke-linecap="round" stroke-linejoin="round" />
<path d="M757.7 0.0 C755.1 4.2 747.3 16.7 742.0 25.0 C736.7 33.3 730.2 41.0 726.0 50.0 C721.8 59.0 718.7 69.2 717.0 79.0 C715.3 88.8 714.3 100.8 716.0 109.0 C717.7 117.2 723.6 123.2 727.0 128.0 C730.4 132.8 732.0 130.0 736.5 138.0 C741.0 146.0 746.4 161.0 753.7 176.0 C761.1 191.0 774.6 214.0 780.6 228.0 C786.6 242.0 788.4 254.7 790.0 260.0" fill="none" stroke="#fff" stroke-width="3.0" stroke-linecap="round" stroke-linejoin="round" />
<path d="M791.6 0.0 C797.2 4.5 808.6 13.8 825.0 27.0 C841.4 40.2 879.2 70.3 890.0 79.0" fill="none" stroke="#fff" stroke-width="3.0" stroke-linecap="round" stroke-linejoin="round" />
<polyline points="836.7,0.0 890.0,43.0" fill="none" stroke="#fff" stroke-width="3.0" stroke-linecap="round" stroke-linejoin="round" />
<polyline points="755.5,4.5 890.0,122.0" fill="none" stroke="#fff" stroke-width="3.0" stroke-linecap="round" stroke-linejoin="round" />
<polyline points="742.0,25.0 803.0,79.0" fill="none" stroke="#fff" stroke-width="3.0" stroke-linecap="round" stroke-linejoin="round" />
<polyline points="728.0,50.0 787.0,99.0" fill="none" stroke="#fff" stroke-width="3.0" stroke-linecap="round" stroke-linejoin="round" />
<path d="M721.6 77.0 C736.5 90.0 787.4 134.0 811.0 155.0 C834.6 176.0 848.2 195.3 863.0 203.0 C877.8 210.7 893.8 201.3 900.0 201.0" fill="none" stroke="#fff" stroke-width="3.0" stroke-linecap="round" stroke-linejoin="round" />
<polyline points="830.5,140.0 878.5,186.0" fill="none" stroke="#fff" stroke-width="3.0" stroke-linecap="round" stroke-linejoin="round" />
<polyline points="888.0,157.0 874.7,203.0" fill="none" stroke="#fff" stroke-width="3.0" stroke-linecap="round" stroke-linejoin="round" />
<path d="M877.0 0.0 C868.0 10.5 839.8 45.0 823.0 63.0 C806.2 81.0 790.7 95.9 776.0 108.0 C761.3 120.1 741.8 130.8 735.0 135.4" fill="none" stroke="#fff" stroke-width="3.0" stroke-linecap="round" stroke-linejoin="round" />
<polyline points="838.0,90.0 792.0,136.0" fill="none" stroke="#fff" stroke-width="3.0" stroke-linecap="round" stroke-linejoin="round" />
<path d="M803.6 170.6 L830.5 213.0 L846.0 195.6" fill="none" stroke="#fff" stroke-width="3.0" stroke-linecap="round" stroke-linejoin="round" />
<path d="M765.0 153.0 C772.7 170.8 802.4 241.4 811.0 260.0 C819.6 278.6 808.4 242.8 816.4 264.5 C824.4 286.2 852.1 369.1 859.3 390.0" fill="none" stroke="#fff" stroke-width="3.0" stroke-linecap="round" stroke-linejoin="round" />
<polyline points="750.0,160.0 765.0,153.0" fill="none" stroke="#fff" stroke-width="3.0" stroke-linecap="round" stroke-linejoin="round" />
<polyline points="771.0,234.0 813.0,211.0" fill="none" stroke="#fff" stroke-width="3.0" stroke-linecap="round" stroke-linejoin="round" />
<path d="M811.0 236.0 L838.0 232.0 L840.0 243.0" fill="none" stroke="#fff" stroke-width="3.0" stroke-linecap="round" stroke-linejoin="round" />
<path d="M857.0 222.0 L865.0 228.0 L861.0 244.0" fill="none" stroke="#fff" stroke-width="3.0" stroke-linecap="round" stroke-linejoin="round" />
<path d="M869.0 250.0 C870.3 247.7 871.8 239.3 877.0 236.0 C882.2 232.7 896.2 231.0 900.0 230.0" fill="none" stroke="#fff" stroke-width="3.0" stroke-linecap="round" stroke-linejoin="round" />
<polyline points="791.6,275.8 816.4,266.7" fill="none" stroke="#fff" stroke-width="3.0" stroke-linecap="round" stroke-linejoin="round" />
<polyline points="790.0,298.0 825.0,289.0" fill="none" stroke="#fff" stroke-width="3.0" stroke-linecap="round" stroke-linejoin="round" />
<polyline points="809.6,318.7 830.0,312.0" fill="none" stroke="#fff" stroke-width="3.0" stroke-linecap="round" stroke-linejoin="round" />
<polyline points="816.4,341.0 834.5,334.5" fill="none" stroke="#fff" stroke-width="3.0" stroke-linecap="round" stroke-linejoin="round" />
<polyline points="726.0,221.6 755.5,264.5" fill="none" stroke="#fff" stroke-width="3.0" stroke-linecap="round" stroke-linejoin="round" />
<polyline points="866.0,278.0 880.0,310.0" fill="none" stroke="#fff" stroke-width="3.0" stroke-linecap="round" stroke-linejoin="round" />
<polyline points="868.0,260.0 900.0,266.0" fill="none" stroke="#fff" stroke-width="3.0" stroke-linecap="round" stroke-linejoin="round" />
<path d="M945.5 0.0 C948.5 30.8 959.4 151.7 963.5 185.0 C967.6 218.3 968.9 197.5 970.0 200.0" fill="none" stroke="#fff" stroke-width="3.0" stroke-linecap="round" stroke-linejoin="round" />
<path d="M977.0 0.0 C980.3 25.2 993.2 124.3 997.0 151.0 C1000.8 177.7 999.5 158.5 1000.0 160.0" fill="none" stroke="#fff" stroke-width="3.0" stroke-linecap="round" stroke-linejoin="round" />
<polyline points="1015.4,0.0 1029.0,117.0" fill="none" stroke="#fff" stroke-width="3.0" stroke-linecap="round" stroke-linejoin="round" />
<path d="M1060.6 0.0 L1065.0 67.7 L1071.6 113.0 L1074.0 200.0 L1069.3 239.7 L1053.5 246.4" fill="none" stroke="#fff" stroke-width="3.0" stroke-linecap="round" stroke-linejoin="round" />
<polyline points="925.0,65.5 938.7,200.0" fill="none" stroke="#fff" stroke-width="3.0" stroke-linecap="round" stroke-linejoin="round" />
<polyline points="968.0,72.0 979.0,167.0" fill="none" stroke="#fff" stroke-width="3.0" stroke-linecap="round" stroke-linejoin="round" />
<polyline points="1042.5,63.0 1051.6,124.0" fill="none" stroke="#fff" stroke-width="3.0" stroke-linecap="round" stroke-linejoin="round" />
<polyline points="959.0,0.0 963.5,29.0" fill="none" stroke="#fff" stroke-width="3.0" stroke-linecap="round" stroke-linejoin="round" />
<polyline points="945.5,29.0 1054.0,20.0" fill="none" stroke="#fff" stroke-width="3.0" stroke-linecap="round" stroke-linejoin="round" />
<path d="M916.0 65.5 L947.7 49.7 L1047.0 37.0 L1049.0 43.0 L947.7 56.0" fill="none" stroke="#fff" stroke-width="3.0" stroke-linecap="round" stroke-linejoin="round" />
<polyline points="947.7,72.0 1060.6,61.0" fill="none" stroke="#fff" stroke-width="3.0" stroke-linecap="round" stroke-linejoin="round" />
<polyline points="990.6,97.0 1044.8,92.5" fill="none" stroke="#fff" stroke-width="3.0" stroke-linecap="round" stroke-linejoin="round" />
<polyline points="923.0,124.0 1072.0,106.0" fill="none" stroke="#fff" stroke-width="3.0" stroke-linecap="round" stroke-linejoin="round" />
<path d="M1038.0 117.0 C1023.0 130.8 970.7 178.8 947.7 200.0 C924.7 221.2 908.0 236.7 900.0 244.0" fill="none" stroke="#fff" stroke-width="3.0" stroke-linecap="round" stroke-linejoin="round" />
<polyline points="1049.0,135.4 979.0,200.0" fill="none" stroke="#fff" stroke-width="3.0" stroke-linecap="round" stroke-linejoin="round" />
<path d="M993.0 162.5 C998.2 168.8 1016.7 190.1 1024.5 200.0 C1032.3 209.9 1037.4 218.3 1040.0 222.0" fill="none" stroke="#fff" stroke-width="3.0" stroke-linecap="round" stroke-linejoin="round" />
<polyline points="880.0,38.0 905.0,58.7" fill="none" stroke="#fff" stroke-width="3.0" stroke-linecap="round" stroke-linejoin="round" />
<polyline points="880.0,74.5 902.6,56.4" fill="none" stroke="#fff" stroke-width="3.0" stroke-linecap="round" stroke-linejoin="round" />
<polyline points="880.0,106.0 917.0,142.0" fill="none" stroke="#fff" stroke-width="3.0" stroke-linecap="round" stroke-linejoin="round" />
<polyline points="886.8,169.0 925.0,165.0" fill="none" stroke="#fff" stroke-width="3.0" stroke-linecap="round" stroke-linejoin="round" />
<polyline points="880.0,233.0 947.7,224.0" fill="none" stroke="#fff" stroke-width="3.0" stroke-linecap="round" stroke-linejoin="round" />
<path d="M965.8 264.5 C984.8 278.4 1057.1 331.8 1080.0 348.0 C1102.9 364.2 1099.2 359.7 1103.0 362.0" fill="none" stroke="#fff" stroke-width="3.0" stroke-linecap="round" stroke-linejoin="round" />
<polyline points="1029.0,190.0 1080.0,264.5" fill="none" stroke="#fff" stroke-width="3.0" stroke-linecap="round" stroke-linejoin="round" />
<polyline points="1033.5,219.0 984.0,296.0" fill="none" stroke="#fff" stroke-width="3.0" stroke-linecap="round" stroke-linejoin="round" />
<polyline points="1051.6,244.0 1002.0,309.6" fill="none" stroke="#fff" stroke-width="3.0" stroke-linecap="round" stroke-linejoin="round" />
<polyline points="1074.0,273.5 1024.5,330.0" fill="none" stroke="#fff" stroke-width="3.0" stroke-linecap="round" stroke-linejoin="round" />
<polyline points="1080.0,310.0 1045.0,352.0" fill="none" stroke="#fff" stroke-width="3.0" stroke-linecap="round" stroke-linejoin="round" />
<polyline points="1032.0,418.0 1045.8,474.8" fill="none" stroke="#fff" stroke-width="3.0" stroke-linecap="round" stroke-linejoin="round" />
<polyline points="1009.7,425.0 1027.7,481.6" fill="none" stroke="#fff" stroke-width="3.0" stroke-linecap="round" stroke-linejoin="round" />
<polyline points="1000.6,529.0 1016.4,580.0" fill="none" stroke="#fff" stroke-width="3.0" stroke-linecap="round" stroke-linejoin="round" />
<path d="M1109.0 411.6 C1095.5 439.7 1043.4 546.9 1027.7 580.0 C1012.0 613.1 1017.1 605.0 1015.0 610.0" fill="none" stroke="#fff" stroke-width="3.0" stroke-linecap="round" stroke-linejoin="round" />
<path d="M1189.0 398.0 C1180.7 413.8 1153.3 462.6 1139.0 492.9 C1124.7 523.2 1112.0 558.8 1103.0 580.0 C1094.0 601.2 1088.0 613.3 1085.0 620.0" fill="none" stroke="#fff" stroke-width="3.0" stroke-linecap="round" stroke-linejoin="round" />
<path d="M1094.0 445.5 L1202.5 502.0 L1216.0 515.4 L1198.0 538.0 L1153.0 580.0 L1110.0 625.0" fill="none" stroke="#fff" stroke-width="3.0" stroke-linecap="round" stroke-linejoin="round" />
<polyline points="1103.0,427.4 1240.0,499.6" fill="none" stroke="#fff" stroke-width="3.0" stroke-linecap="round" stroke-linejoin="round" />
<polyline points="1078.0,474.8 1220.6,556.0" fill="none" stroke="#fff" stroke-width="3.0" stroke-linecap="round" stroke-linejoin="round" />
<polyline points="1064.8,502.0 1166.4,558.0" fill="none" stroke="#fff" stroke-width="3.0" stroke-linecap="round" stroke-linejoin="round" />
<polyline points="1058.0,527.0 1140.0,575.0" fill="none" stroke="#fff" stroke-width="3.0" stroke-linecap="round" stroke-linejoin="round" />
<polyline points="1040.0,550.0 1100.0,582.0" fill="none" stroke="#fff" stroke-width="3.0" stroke-linecap="round" stroke-linejoin="round" />
<polyline points="1153.0,409.0 1240.0,456.7" fill="none" stroke="#fff" stroke-width="3.0" stroke-linecap="round" stroke-linejoin="round" />
<polyline points="1157.0,380.0 1105.5,416.0" fill="none" stroke="#fff" stroke-width="3.0" stroke-linecap="round" stroke-linejoin="round" />
<polyline points="1240.0,411.6 1211.6,459.0" fill="none" stroke="#fff" stroke-width="3.0" stroke-linecap="round" stroke-linejoin="round" />
<path d="M1040.0 221.6 C1051.3 237.4 1087.4 291.2 1107.7 316.4 C1128.0 341.6 1140.0 356.7 1162.0 373.0 C1184.0 389.3 1227.0 407.4 1240.0 414.3" fill="none" stroke="#fff" stroke-width="3.0" stroke-linecap="round" stroke-linejoin="round" />
<polyline points="1240.0,520.0 1160.0,600.0" fill="none" stroke="#fff" stroke-width="3.0" stroke-linecap="round" stroke-linejoin="round" />
<polyline points="527.3,382.0 574.7,411.6" fill="none" stroke="#fff" stroke-width="3.0" stroke-linecap="round" stroke-linejoin="round" />
<polyline points="615.4,423.0 644.7,447.7" fill="none" stroke="#fff" stroke-width="3.0" stroke-linecap="round" stroke-linejoin="round" />
<polyline points="629.0,429.7 660.5,386.8" fill="none" stroke="#fff" stroke-width="3.0" stroke-linecap="round" stroke-linejoin="round" />
<path d="M498.0 511.0 C520.6 522.5 601.1 564.5 633.4 580.0 C665.7 595.5 682.2 600.0 692.0 604.0" fill="none" stroke="#fff" stroke-width="3.0" stroke-linecap="round" stroke-linejoin="round" />
<path d="M592.8 474.8 C589.8 481.6 579.2 504.1 574.7 515.4 C570.2 526.7 567.2 538.0 565.7 542.5" fill="none" stroke="#fff" stroke-width="3.0" stroke-linecap="round" stroke-linejoin="round" />
<path d="M572.5 257.7 C562.3 279.8 523.6 362.9 511.5 390.0 C499.4 417.1 501.9 415.0 500.0 420.0" fill="none" stroke="#fff" stroke-width="3.0" stroke-linecap="round" stroke-linejoin="round" />
<polyline points="534.0,269.0 502.5,334.5" fill="none" stroke="#fff" stroke-width="3.0" stroke-linecap="round" stroke-linejoin="round" />
<path d="M511.5 246.0 C515.2 249.4 525.8 261.4 534.0 266.7 C542.2 272.0 556.5 276.1 561.0 278.0" fill="none" stroke="#fff" stroke-width="3.0" stroke-linecap="round" stroke-linejoin="round" />
<polyline points="536.0,255.5 570.0,269.0" fill="none" stroke="#fff" stroke-width="3.0" stroke-linecap="round" stroke-linejoin="round" />
<path d="M561.0 323.0 C565.9 322.5 583.1 320.5 590.6 319.8 C598.1 319.1 603.4 318.9 606.0 318.7" fill="none" stroke="#fff" stroke-width="3.0" stroke-linecap="round" stroke-linejoin="round" />
<path d="M581.5 291.6 L590.6 319.8 L595.0 348.0 L566.8 368.3 L545.0 385.0" fill="none" stroke="#fff" stroke-width="3.0" stroke-linecap="round" stroke-linejoin="round" />
<polyline points="566.8,368.3 603.0,386.0" fill="none" stroke="#fff" stroke-width="3.0" stroke-linecap="round" stroke-linejoin="round" />
<polyline points="508.0,530.0 498.0,560.0" fill="none" stroke="#fff" stroke-width="3.0" stroke-linecap="round" stroke-linejoin="round" />
<polyline points="518.3,787.6 570.0,814.7" fill="none" stroke="#fff" stroke-width="3.0" stroke-linecap="round" stroke-linejoin="round" />
<polyline points="505.0,720.0 520.0,686.0" fill="none" stroke="#fff" stroke-width="3.0" stroke-linecap="round" stroke-linejoin="round" />
<path d="M912.0 570.0 C919.1 593.3 944.3 676.7 954.8 710.0 C965.3 743.3 971.6 760.0 975.0 770.0" fill="none" stroke="#fff" stroke-width="3.0" stroke-linecap="round" stroke-linejoin="round" />
<polyline points="1027.0,570.0 963.8,687.4" fill="none" stroke="#fff" stroke-width="3.0" stroke-linecap="round" stroke-linejoin="round" />
<path d="M995.4 583.5 C997.7 586.5 998.2 592.6 1009.0 601.6 C1019.8 610.6 1051.5 631.7 1060.0 637.7" fill="none" stroke="#fff" stroke-width="3.0" stroke-linecap="round" stroke-linejoin="round" />
<polyline points="988.7,646.7 1031.6,669.3" fill="none" stroke="#fff" stroke-width="3.0" stroke-linecap="round" stroke-linejoin="round" />
<polyline points="1040.0,588.0 1121.0,633.2" fill="none" stroke="#fff" stroke-width="3.0" stroke-linecap="round" stroke-linejoin="round" />
<polyline points="1074.0,572.0 1128.0,601.6" fill="none" stroke="#fff" stroke-width="3.0" stroke-linecap="round" stroke-linejoin="round" />
<polyline points="1101.0,570.0 1062.6,651.0" fill="none" stroke="#fff" stroke-width="3.0" stroke-linecap="round" stroke-linejoin="round" />
<polyline points="1157.4,619.7 1157.4,716.7" fill="none" stroke="#fff" stroke-width="3.0" stroke-linecap="round" stroke-linejoin="round" />
<polyline points="1146.0,743.0 1146.0,808.0" fill="none" stroke="#fff" stroke-width="3.0" stroke-linecap="round" stroke-linejoin="round" />
<path d="M1191.0 595.0 L1207.0 610.0 L1240.0 592.0" fill="none" stroke="#fff" stroke-width="3.0" stroke-linecap="round" stroke-linejoin="round" />
<polyline points="1205.0,610.0 1225.0,628.0" fill="none" stroke="#fff" stroke-width="3.0" stroke-linecap="round" stroke-linejoin="round" />
<path d="M1162.0 660.0 C1165.7 656.0 1176.5 640.3 1184.0 636.0 C1191.5 631.7 1203.2 634.3 1207.0 634.0" fill="none" stroke="#fff" stroke-width="3.0" stroke-linecap="round" stroke-linejoin="round" />
<polyline points="995.4,695.0 1060.0,886.0" fill="none" stroke="#fff" stroke-width="3.0" stroke-linecap="round" stroke-linejoin="round" />
<path d="M957.0 706.3 C960.8 718.0 969.4 746.3 979.6 776.3 C989.8 806.2 1011.6 867.7 1018.0 886.0" fill="none" stroke="#fff" stroke-width="3.0" stroke-linecap="round" stroke-linejoin="round" />
<path d="M905.0 722.0 C906.9 726.5 911.5 729.4 916.4 749.0 C921.3 768.6 927.0 816.7 934.5 839.5 C942.0 862.3 957.1 878.2 961.6 886.0" fill="none" stroke="#fff" stroke-width="3.0" stroke-linecap="round" stroke-linejoin="round" />
<polyline points="860.0,760.5 907.4,727.8" fill="none" stroke="#fff" stroke-width="3.0" stroke-linecap="round" stroke-linejoin="round" />
<polyline points="883.0,871.0 936.7,854.0" fill="none" stroke="#fff" stroke-width="3.0" stroke-linecap="round" stroke-linejoin="round" />
<polyline points="1000.0,828.0 1033.0,819.0" fill="none" stroke="#fff" stroke-width="3.0" stroke-linecap="round" stroke-linejoin="round" />
<polyline points="1146.0,770.0 1168.0,770.0" fill="none" stroke="#fff" stroke-width="3.0" stroke-linecap="round" stroke-linejoin="round" />
<polyline points="1146.0,795.0 1168.0,795.0" fill="none" stroke="#fff" stroke-width="3.0" stroke-linecap="round" stroke-linejoin="round" />
<path d="M929.0 716.0 C930.2 721.2 935.5 741.0 936.0 747.0 C936.5 753.0 932.7 751.2 932.0 752.0" fill="none" stroke="#fff" stroke-width="3.0" stroke-linecap="round" stroke-linejoin="round" />
<circle cx="552" cy="92.5" r="3.2" fill="#fff"/><circle cx="1128" cy="601.6" r="2.8" fill="#fff"/>
<ellipse cx="634" cy="174" rx="6" ry="3.5" transform="rotate(-40 634 174)" fill="none" stroke="#fff" stroke-width="3"/>
<path d="M498.0 149.0 C503.7 157.5 519.2 183.5 532.0 200.0 C544.8 216.5 560.3 232.0 575.0 248.0 C589.7 264.0 605.8 282.7 620.0 296.0 C634.2 309.3 647.0 318.0 660.0 328.0 C673.0 338.0 684.7 347.5 698.0 356.0 C711.3 364.5 725.3 371.5 740.0 379.0 C754.7 386.5 778.3 397.3 786.0 401.0" fill="none" stroke="#fff" stroke-width="5.4" stroke-linecap="round" stroke-linejoin="round" />
<path d="M615.0 296.0 L700.0 235.9 L803.6 170.6 L845.9 126.5 L878.5 90.0 L902.6 64.0 L916.0 65.5" fill="none" stroke="#fff" stroke-width="5.4" stroke-linecap="round" stroke-linejoin="round" />
<path d="M870.3 438.7 C877.8 462.2 901.3 535.5 915.4 580.0 C929.5 624.5 948.2 685.0 954.8 706.0" fill="none" stroke="#fff" stroke-width="5.4" stroke-linecap="round" stroke-linejoin="round" />
<path d="M860.0 760.5 C867.9 755.0 896.1 735.5 907.4 727.8 C918.7 720.1 913.4 720.1 927.7 714.5 C942.0 708.9 971.0 702.3 993.0 694.0 C1015.0 685.7 1032.6 677.2 1060.0 664.8 C1087.4 652.4 1127.4 635.5 1157.4 619.7 C1187.4 603.9 1226.2 578.3 1240.0 570.0" fill="none" stroke="#fff" stroke-width="5.4" stroke-linecap="round" stroke-linejoin="round" />
<path d="M1240.0 27.0 L1220.0 45.0" fill="none" stroke="#fff" stroke-width="5.4" stroke-linecap="round" stroke-linejoin="round" />
<polyline points="700.5,603.3 653.0,690.6 605.5,774.3 551.6,890.0" fill="none" stroke="#fff" stroke-width="2.6" stroke-linecap="round" stroke-linejoin="round" />
<polyline points="730.4,475.7 699.3,556.1 682.6,594.2 635.5,680.9 587.6,765.2 533.5,881.6" fill="none" stroke="#fff" stroke-width="1.8" stroke-linecap="round" stroke-linejoin="round" />
<polyline points="744.4,436.1 723.5,472.7 692.3,553.3 675.5,591.8" fill="none" stroke="#fff" stroke-width="1.6" stroke-linecap="round" stroke-linejoin="round" />
<polyline points="843.3,565.0 813.6,625.8 822.3,664.2 838.4,721.3" fill="none" stroke="#fff" stroke-width="1.8" stroke-linecap="round" stroke-linejoin="round" />
<polyline points="844.6,565.0 857.0,609.6 874.4,699.0 875.6,709.0" fill="none" stroke="#fff" stroke-width="1.8" stroke-linecap="round" stroke-linejoin="round" />
<polyline points="849.6,617.0 874.4,699.0" fill="none" stroke="#fff" stroke-width="1.8" stroke-linecap="round" stroke-linejoin="round" />
<polyline points="838.4,575.0 846.7,572.6" fill="none" stroke="#fff" stroke-width="1.5" stroke-linecap="round" stroke-linejoin="round" />
<polyline points="834.2,583.7 848.6,579.5" fill="none" stroke="#fff" stroke-width="1.5" stroke-linecap="round" stroke-linejoin="round" />
<polyline points="829.9,592.4 850.6,586.4" fill="none" stroke="#fff" stroke-width="1.5" stroke-linecap="round" stroke-linejoin="round" />
<polyline points="825.7,601.1 852.5,593.3" fill="none" stroke="#fff" stroke-width="1.5" stroke-linecap="round" stroke-linejoin="round" />
<polyline points="821.4,609.8 854.4,600.2" fill="none" stroke="#fff" stroke-width="1.5" stroke-linecap="round" stroke-linejoin="round" />
<polyline points="817.2,618.5 856.3,607.1" fill="none" stroke="#fff" stroke-width="1.5" stroke-linecap="round" stroke-linejoin="round" />
<polyline points="813.9,627.2 857.9,614.4" fill="none" stroke="#fff" stroke-width="1.5" stroke-linecap="round" stroke-linejoin="round" />
<polyline points="815.9,635.9 859.6,623.2" fill="none" stroke="#fff" stroke-width="1.5" stroke-linecap="round" stroke-linejoin="round" />
<polyline points="817.9,644.6 861.4,632.0" fill="none" stroke="#fff" stroke-width="1.5" stroke-linecap="round" stroke-linejoin="round" />
<polyline points="819.8,653.3 863.1,640.8" fill="none" stroke="#fff" stroke-width="1.5" stroke-linecap="round" stroke-linejoin="round" />
<polyline points="821.8,662.0 864.8,649.5" fill="none" stroke="#fff" stroke-width="1.5" stroke-linecap="round" stroke-linejoin="round" />
<polyline points="824.1,670.7 866.5,658.4" fill="none" stroke="#fff" stroke-width="1.5" stroke-linecap="round" stroke-linejoin="round" />
<polyline points="826.6,679.4 868.2,667.3" fill="none" stroke="#fff" stroke-width="1.5" stroke-linecap="round" stroke-linejoin="round" />
<polyline points="829.0,688.1 870.0,676.2" fill="none" stroke="#fff" stroke-width="1.5" stroke-linecap="round" stroke-linejoin="round" />
<polyline points="831.5,696.8 871.7,685.1" fill="none" stroke="#fff" stroke-width="1.5" stroke-linecap="round" stroke-linejoin="round" />
<polyline points="833.9,705.5 873.4,694.0" fill="none" stroke="#fff" stroke-width="1.5" stroke-linecap="round" stroke-linejoin="round" />
<polyline points="836.4,714.2 874.9,703.0" fill="none" stroke="#fff" stroke-width="1.5" stroke-linecap="round" stroke-linejoin="round" />
<polyline points="837.0,721.0 889.0,709.0 891.0,725.0 845.0,738.0 837.0,721.0" fill="none" stroke="#fff" stroke-width="1.8" stroke-linecap="round" stroke-linejoin="round" />
<polyline points="845.0,722.0 848.0,736.0" fill="none" stroke="#fff" stroke-width="1.4" stroke-linecap="round" stroke-linejoin="round" />
<polyline points="852.5,720.3 855.5,733.5" fill="none" stroke="#fff" stroke-width="1.4" stroke-linecap="round" stroke-linejoin="round" />
<polyline points="860.0,718.6 863.0,731.0" fill="none" stroke="#fff" stroke-width="1.4" stroke-linecap="round" stroke-linejoin="round" />
<polyline points="867.5,716.9 870.5,728.5" fill="none" stroke="#fff" stroke-width="1.4" stroke-linecap="round" stroke-linejoin="round" />
<polyline points="875.0,715.2 878.0,726.0" fill="none" stroke="#fff" stroke-width="1.4" stroke-linecap="round" stroke-linejoin="round" />
<polyline points="882.5,713.5 885.5,723.5" fill="none" stroke="#fff" stroke-width="1.4" stroke-linecap="round" stroke-linejoin="round" />
<polyline points="864.4,560.0 911.6,713.8" fill="none" stroke="#fff" stroke-width="1.8" stroke-linecap="round" stroke-linejoin="round" />
<polyline points="884.3,560.0 929.0,699.0" fill="none" stroke="#fff" stroke-width="1.8" stroke-linecap="round" stroke-linejoin="round" />
<polyline points="871.9,637.0 904.0,713.8" fill="none" stroke="#fff" stroke-width="1.8" stroke-linecap="round" stroke-linejoin="round" />
<polyline points="876.0,643.0 890.0,690.0" fill="none" stroke="#fff" stroke-width="1.5" stroke-linecap="round" stroke-linejoin="round" />
<polyline points="802.4,642.0 822.3,679.0" fill="none" stroke="#fff" stroke-width="1.8" stroke-linecap="round" stroke-linejoin="round" />
<path d="M1240.0 27.0 C1233.0 36.8 1210.7 69.5 1198.0 86.0 C1185.3 102.5 1176.0 116.2 1164.0 126.0 C1152.0 135.8 1139.8 140.7 1126.0 144.5 C1112.2 148.3 1095.3 146.8 1081.0 149.0 C1066.7 151.2 1052.5 149.5 1040.0 158.0 C1027.5 166.5 1023.3 182.2 1006.0 200.0 C988.7 217.8 957.0 245.2 936.0 264.5 C915.0 283.8 900.7 295.1 880.0 316.0 C859.3 336.9 825.7 376.0 812.0 390.0 C798.3 404.0 803.2 397.3 798.0 400.0 C792.8 402.7 783.8 405.0 781.0 406.0" fill="none" stroke="#fff" stroke-width="7.5" stroke-linecap="round" stroke-linejoin="round" />
<path d="M902.6 0.0 C905.0 18.8 912.9 79.7 917.0 113.0 C921.1 146.3 924.2 174.8 927.4 200.0 C930.6 225.2 934.6 253.8 936.0 264.5" fill="none" stroke="#fff" stroke-width="7.5" stroke-linecap="round" stroke-linejoin="round" />
<path d="M934.0 264.5 C946.7 274.8 986.2 306.6 1010.0 326.0 C1033.8 345.4 1052.0 362.7 1077.0 381.0 C1102.0 399.3 1132.8 419.2 1160.0 436.0 C1187.2 452.8 1226.7 474.0 1240.0 481.6" fill="none" stroke="#fff" stroke-width="7.5" stroke-linecap="round" stroke-linejoin="round" />
<path d="M781.0 402.0 C774.2 415.0 753.7 450.3 740.0 480.0 C726.3 509.7 707.0 560.2 699.0 580.0 C691.0 599.8 701.0 581.3 692.0 599.0 C683.0 616.7 660.5 657.5 644.7 686.0 C628.9 714.5 614.0 736.7 597.0 770.0 C580.0 803.3 552.0 866.7 543.0 886.0" fill="none" stroke="#fff" stroke-width="7.5" stroke-linecap="round" stroke-linejoin="round" />
<polyline points="700.0,580.0 692.0,599.0 644.7,686.0 597.0,770.0 543.0,886.0" fill="none" stroke="#fff" stroke-width="10.5" stroke-linecap="round" stroke-linejoin="round" />
<circle cx="590.6" cy="319.8" r="6" fill="none" stroke="#fff" stroke-width="3.5"/>
<circle cx="566.8" cy="368.3" r="6" fill="none" stroke="#fff" stroke-width="3.5"/>
<circle cx="689.8" cy="194.5" r="5" fill="none" stroke="#fff" stroke-width="3.5"/>
<circle cx="660.5" cy="384" r="6" fill="none" stroke="#fff" stroke-width="3.5"/>
<circle cx="907.4" cy="728" r="8" fill="none" stroke="#fff" stroke-width="3.5"/>
<circle cx="936.7" cy="854" r="8" fill="none" stroke="#fff" stroke-width="3.5"/>
<circle cx="865" cy="758.5" r="5" fill="none" stroke="#fff" stroke-width="3.5"/>
<circle cx="864.5" cy="758" r="5" fill="none" stroke="#fff" stroke-width="3.5"/>
<circle cx="500" cy="428" r="7" fill="none" stroke="#fff" stroke-width="3.5"/>
<rect x="901.5" y="90.0" width="27" height="10" rx="2" fill="#148a38" stroke="#eef6ee" stroke-width="0.8"/>
<text x="915.0" y="98.2" font-size="8" fill="#d2ec8c" text-anchor="middle" font-weight="bold" letter-spacing="0.3">A4119</text>
<rect x="1080.5" y="146.7" width="27" height="10" rx="2" fill="#148a38" stroke="#eef6ee" stroke-width="0.8"/>
<text x="1094.0" y="154.9" font-size="8" fill="#d2ec8c" text-anchor="middle" font-weight="bold" letter-spacing="0.3">A4160</text>
<rect x="1194.5" y="61.6" width="27" height="10" rx="2" fill="#148a38" stroke="#eef6ee" stroke-width="0.8"/>
<text x="1208.0" y="69.8" font-size="8" fill="#d2ec8c" text-anchor="middle" font-weight="bold" letter-spacing="0.3">A4160</text>
<rect x="961.3" y="223.0" width="27" height="10" rx="2" fill="#148a38" stroke="#eef6ee" stroke-width="0.8"/>
<text x="974.8" y="231.2" font-size="8" fill="#d2ec8c" text-anchor="middle" font-weight="bold" letter-spacing="0.3">A4160</text>
<rect x="877.5" y="304.6" width="27" height="10" rx="2" fill="#148a38" stroke="#eef6ee" stroke-width="0.8"/>
<text x="891.0" y="312.8" font-size="8" fill="#d2ec8c" text-anchor="middle" font-weight="bold" letter-spacing="0.3">A4160</text>
<rect x="1029.0" y="347.0" width="27" height="10" rx="2" fill="#148a38" stroke="#eef6ee" stroke-width="0.8"/>
<text x="1042.5" y="355.2" font-size="8" fill="#d2ec8c" text-anchor="middle" font-weight="bold" letter-spacing="0.3">A4119</text>
<rect x="1124.8" y="420.8" width="27" height="10" rx="2" fill="#148a38" stroke="#eef6ee" stroke-width="0.8"/>
<text x="1138.3" y="429.0" font-size="8" fill="#d2ec8c" text-anchor="middle" font-weight="bold" letter-spacing="0.3">A4119</text>
<rect x="791.5" y="386.3" width="27" height="10" rx="2" fill="#148a38" stroke="#eef6ee" stroke-width="0.8"/>
<text x="805.0" y="394.5" font-size="8" fill="#d2ec8c" text-anchor="middle" font-weight="bold" letter-spacing="0.3">A4160</text>
<rect x="746.5" y="457.4" width="27" height="10" rx="2" fill="#148a38" stroke="#eef6ee" stroke-width="0.8"/>
<text x="760.0" y="465.6" font-size="8" fill="#d2ec8c" text-anchor="middle" font-weight="bold" letter-spacing="0.3">A4160</text>
<rect x="674.1" y="589.8" width="27" height="10" rx="2" fill="#148a38" stroke="#eef6ee" stroke-width="0.8"/>
<text x="687.6" y="598.0" font-size="8" fill="#d2ec8c" text-anchor="middle" font-weight="bold" letter-spacing="0.3">A4160</text>
<g><text x="525.0" y="153.2" font-size="9" fill="none" text-anchor="middle" style="letter-spacing:-0.2px" stroke="rgba(255,255,255,0.5)" stroke-width="2">Cardiff Bus</text><text x="525.0" y="153.2" font-size="9" fill="#6b625b" text-anchor="middle" style="letter-spacing:-0.2px" stroke="#6b625b" stroke-width="0.3">Cardiff Bus</text></g>
<circle cx="525.0" cy="142.0" r="1.3" fill="#4a3f38"/>
<g><text x="525.0" y="164.2" font-size="9" fill="none" text-anchor="middle" style="letter-spacing:-0.2px" stroke="rgba(255,255,255,0.5)" stroke-width="2">Leckwith Depot</text><text x="525.0" y="164.2" font-size="9" fill="#6b625b" text-anchor="middle" style="letter-spacing:-0.2px" stroke="#6b625b" stroke-width="0.3">Leckwith Depot</text></g>
<g><text x="1148.0" y="60.2" font-size="9" fill="none" text-anchor="middle" style="letter-spacing:-0.2px" stroke="rgba(255,255,255,0.5)" stroke-width="2">Brains Brewery</text><text x="1148.0" y="60.2" font-size="9" fill="#6b625b" text-anchor="middle" style="letter-spacing:-0.2px" stroke="#6b625b" stroke-width="0.3">Brains Brewery</text></g>
<circle cx="1148.0" cy="47.4" r="1.3" fill="#4a3f38"/>
<g><text x="1124.6" y="196.2" font-size="9" fill="none" text-anchor="middle" style="letter-spacing:-0.2px" stroke="rgba(255,255,255,0.5)" stroke-width="2">Parc</text><text x="1124.6" y="196.2" font-size="9" fill="#6b625b" text-anchor="middle" style="letter-spacing:-0.2px" stroke="#6b625b" stroke-width="0.3">Parc</text></g>
<circle cx="1124.6" cy="184.0" r="1.3" fill="#4a3f38"/>
<g><text x="1207.0" y="225.9" font-size="9" fill="none" text-anchor="middle" style="letter-spacing:-0.2px" stroke="rgba(255,255,255,0.5)" stroke-width="2">Priority Business</text><text x="1207.0" y="225.9" font-size="9" fill="#6b625b" text-anchor="middle" style="letter-spacing:-0.2px" stroke="#6b625b" stroke-width="0.3">Priority Business</text></g>
<circle cx="1207.0" cy="213.0" r="1.3" fill="#4a3f38"/>
<g><text x="1207.0" y="236.5" font-size="9" fill="none" text-anchor="middle" style="letter-spacing:-0.2px" stroke="rgba(255,255,255,0.5)" stroke-width="2">Centre</text><text x="1207.0" y="236.5" font-size="9" fill="#6b625b" text-anchor="middle" style="letter-spacing:-0.2px" stroke="#6b625b" stroke-width="0.3">Centre</text></g>
<g><text x="1203.7" y="289.8" font-size="9" fill="none" text-anchor="middle" style="letter-spacing:-0.2px" stroke="rgba(255,255,255,0.5)" stroke-width="2">Leisure Leagues</text><text x="1203.7" y="289.8" font-size="9" fill="#6b625b" text-anchor="middle" style="letter-spacing:-0.2px" stroke="#6b625b" stroke-width="0.3">Leisure Leagues</text></g>
<circle cx="1203.7" cy="277.0" r="1.3" fill="#4a3f38"/>
<g><text x="725.0" y="321.9" font-size="9" fill="none" text-anchor="middle" style="letter-spacing:-0.2px" stroke="rgba(255,255,255,0.5)" stroke-width="2">Sevenoaks Park</text><text x="725.0" y="321.9" font-size="9" fill="#5e7a4e" text-anchor="middle" style="letter-spacing:-0.2px" stroke="#5e7a4e" stroke-width="0.3">Sevenoaks Park</text></g>
<circle cx="725.0" cy="309.0" r="1.3" fill="#4a3f38"/>
<g><text x="603.0" y="389.2" font-size="9" fill="none" text-anchor="middle" style="letter-spacing:-0.2px" stroke="rgba(255,255,255,0.5)" stroke-width="2">City Gardens</text><text x="603.0" y="389.2" font-size="9" fill="#6b625b" text-anchor="middle" style="letter-spacing:-0.2px" stroke="#6b625b" stroke-width="0.3">City Gardens</text></g>
<circle cx="603.0" cy="377.0" r="1.3" fill="#4a3f38"/>
<g><text x="713.7" y="404.2" font-size="9" fill="none" text-anchor="middle" style="letter-spacing:-0.2px" stroke="rgba(255,255,255,0.5)" stroke-width="2">Gripoly Mills</text><text x="713.7" y="404.2" font-size="9" fill="#6b625b" text-anchor="middle" style="letter-spacing:-0.2px" stroke="#6b625b" stroke-width="0.3">Gripoly Mills</text></g>
<circle cx="713.7" cy="392.4" r="1.3" fill="#4a3f38"/>
<g><text x="713.7" y="414.8" font-size="9" fill="none" text-anchor="middle" style="letter-spacing:-0.2px" stroke="rgba(255,255,255,0.5)" stroke-width="2">Retail Park</text><text x="713.7" y="414.8" font-size="9" fill="#6b625b" text-anchor="middle" style="letter-spacing:-0.2px" stroke="#6b625b" stroke-width="0.3">Retail Park</text></g>
<g><text x="534.0" y="481.2" font-size="9" fill="none" text-anchor="middle" style="letter-spacing:-0.2px" stroke="rgba(255,255,255,0.5)" stroke-width="2">Bessemer Road Market</text><text x="534.0" y="481.2" font-size="9" fill="#6b625b" text-anchor="middle" style="letter-spacing:-0.2px" stroke="#6b625b" stroke-width="0.3">Bessemer Road Market</text></g>
<circle cx="534.0" cy="469.0" r="1.3" fill="#4a3f38"/>
<g><text x="621.7" y="493.2" font-size="9" fill="none" text-anchor="middle" style="letter-spacing:-0.2px" stroke="rgba(255,255,255,0.5)" stroke-width="2">Glynstell Park</text><text x="621.7" y="493.2" font-size="9" fill="#6b625b" text-anchor="middle" style="letter-spacing:-0.2px" stroke="#6b625b" stroke-width="0.3">Glynstell Park</text></g>
<circle cx="621.7" cy="480.5" r="1.3" fill="#4a3f38"/>
<g><text x="612.7" y="531.5" font-size="9" fill="none" text-anchor="middle" style="letter-spacing:-0.2px" stroke="rgba(255,255,255,0.5)" stroke-width="2">Selco</text><text x="612.7" y="531.5" font-size="9" fill="#6b625b" text-anchor="middle" style="letter-spacing:-0.2px" stroke="#6b625b" stroke-width="0.3">Selco</text></g>
<circle cx="612.7" cy="518.8" r="1.3" fill="#4a3f38"/>
<g><text x="703.7" y="697.4" font-size="9" fill="none" text-anchor="middle" style="letter-spacing:-0.2px" stroke="rgba(255,255,255,0.5)" stroke-width="2">Penarth Road</text><text x="703.7" y="697.4" font-size="9" fill="#6b625b" text-anchor="middle" style="letter-spacing:-0.2px" stroke="#6b625b" stroke-width="0.3">Penarth Road</text></g>
<circle cx="703.7" cy="685.0" r="1.3" fill="#4a3f38"/>
<g><text x="703.7" y="708.2" font-size="9" fill="none" text-anchor="middle" style="letter-spacing:-0.2px" stroke="rgba(255,255,255,0.5)" stroke-width="2">Industrial Units</text><text x="703.7" y="708.2" font-size="9" fill="#6b625b" text-anchor="middle" style="letter-spacing:-0.2px" stroke="#6b625b" stroke-width="0.3">Industrial Units</text></g>
<g><text x="582.6" y="719.9" font-size="9" fill="none" text-anchor="middle" style="letter-spacing:-0.2px" stroke="rgba(255,255,255,0.5)" stroke-width="2">Freemans Parc</text><text x="582.6" y="719.9" font-size="9" fill="#6b625b" text-anchor="middle" style="letter-spacing:-0.2px" stroke="#6b625b" stroke-width="0.3">Freemans Parc</text></g>
<circle cx="582.6" cy="707.0" r="1.3" fill="#4a3f38"/>
<g><text x="548.8" y="786.9" font-size="9" fill="none" text-anchor="middle" style="letter-spacing:-0.2px" stroke="rgba(255,255,255,0.5)" stroke-width="2">Dreams</text><text x="548.8" y="786.9" font-size="9" fill="#6b625b" text-anchor="middle" style="letter-spacing:-0.2px" stroke="#6b625b" stroke-width="0.3">Dreams</text></g>
<circle cx="548.8" cy="775.0" r="1.3" fill="#4a3f38"/>
<g><text x="611.0" y="819.0" font-size="9" fill="none" text-anchor="middle" style="letter-spacing:-0.2px" stroke="rgba(255,255,255,0.5)" stroke-width="2">Principality Plastics</text><text x="611.0" y="819.0" font-size="9" fill="#6b625b" text-anchor="middle" style="letter-spacing:-0.2px" stroke="#6b625b" stroke-width="0.3">Principality Plastics</text></g>
<circle cx="611.0" cy="806.3" r="1.3" fill="#4a3f38"/>
<g><text x="508.0" y="854.0" font-size="9" fill="none" text-anchor="middle" style="letter-spacing:-0.2px" stroke="rgba(255,255,255,0.5)" stroke-width="2">Ferrygate Close</text><text x="508.0" y="854.0" font-size="9" fill="#6b625b" text-anchor="middle" style="letter-spacing:-0.2px" stroke="#6b625b" stroke-width="0.3">Ferrygate Close</text></g>
<circle cx="508.0" cy="841.3" r="1.3" fill="#4a3f38"/>
<g><text x="515.0" y="864.6" font-size="9" fill="none" text-anchor="middle" style="letter-spacing:-0.2px" stroke="rgba(255,255,255,0.5)" stroke-width="2">Trade Park</text><text x="515.0" y="864.6" font-size="9" fill="#6b625b" text-anchor="middle" style="letter-spacing:-0.2px" stroke="#6b625b" stroke-width="0.3">Trade Park</text></g>
<g><text x="577.0" y="885.6" font-size="9" fill="none" text-anchor="middle" style="letter-spacing:-0.2px" stroke="rgba(255,255,255,0.5)" stroke-width="2">Planet Gymnastic</text><text x="577.0" y="885.6" font-size="9" fill="#6b625b" text-anchor="middle" style="letter-spacing:-0.2px" stroke="#6b625b" stroke-width="0.3">Planet Gymnastic</text></g>
<circle cx="577.0" cy="874.5" r="1.3" fill="#4a3f38"/>
<g><text x="965.0" y="668.0" font-size="9" fill="none" text-anchor="middle" style="letter-spacing:-0.2px" stroke="rgba(255,255,255,0.5)" stroke-width="2">Worcester Court</text><text x="965.0" y="668.0" font-size="9" fill="#6b625b" text-anchor="middle" style="letter-spacing:-0.2px" stroke="#6b625b" stroke-width="0.3">Worcester Court</text></g>
<circle cx="965.0" cy="655.3" r="1.3" fill="#4a3f38"/>
<g><text x="958.2" y="698.0" font-size="9" fill="none" text-anchor="middle" style="letter-spacing:-0.2px" stroke="rgba(255,255,255,0.5)" stroke-width="2">Plymouth Court</text><text x="958.2" y="698.0" font-size="9" fill="#6b625b" text-anchor="middle" style="letter-spacing:-0.2px" stroke="#6b625b" stroke-width="0.3">Plymouth Court</text></g>
<circle cx="958.2" cy="686.3" r="1.3" fill="#4a3f38"/>
<g><text x="901.8" y="781.7" font-size="9" fill="none" text-anchor="middle" style="letter-spacing:-0.2px" stroke="rgba(255,255,255,0.5)" stroke-width="2">Scout Hall</text><text x="901.8" y="781.7" font-size="9" fill="#6b625b" text-anchor="middle" style="letter-spacing:-0.2px" stroke="#6b625b" stroke-width="0.3">Scout Hall</text></g>
<circle cx="901.8" cy="770.6" r="1.3" fill="#4a3f38"/>
<g><text x="1141.6" y="702.5" font-size="9" fill="none" text-anchor="middle" style="letter-spacing:-0.2px" stroke="rgba(255,255,255,0.5)" stroke-width="2">Channel View Centre</text><text x="1141.6" y="702.5" font-size="9" fill="#6b625b" text-anchor="middle" style="letter-spacing:-0.2px" stroke="#6b625b" stroke-width="0.3">Channel View Centre</text></g>
<circle cx="1141.6" cy="689.6" r="1.3" fill="#4a3f38"/>
<g><text x="1086.7" y="788.2" font-size="9" fill="none" text-anchor="middle" style="letter-spacing:-0.2px" stroke="rgba(255,255,255,0.5)" stroke-width="2">The Marl</text><text x="1086.7" y="788.2" font-size="9" fill="#5e7a4e" text-anchor="middle" style="letter-spacing:-0.2px" stroke="#5e7a4e" stroke-width="0.3">The Marl</text></g>
<circle cx="1086.7" cy="776.3" r="1.3" fill="#4a3f38"/>
<g><text x="948.8" y="279.7" font-size="9" fill="none" text-anchor="middle" style="letter-spacing:-0.2px" stroke="rgba(255,255,255,0.5)" stroke-width="2">Grangetown</text><text x="948.8" y="279.7" font-size="9" fill="#6b625b" text-anchor="middle" style="letter-spacing:-0.2px" stroke="#6b625b" stroke-width="0.3">Grangetown</text></g>
<circle cx="948.8" cy="267.0" r="1.3" fill="#4a3f38"/>
<g><text x="948.8" y="290.2" font-size="9" fill="none" text-anchor="middle" style="letter-spacing:-0.2px" stroke="rgba(255,255,255,0.5)" stroke-width="2">Information Shop</text><text x="948.8" y="290.2" font-size="9" fill="#6b625b" text-anchor="middle" style="letter-spacing:-0.2px" stroke="#6b625b" stroke-width="0.3">Information Shop</text></g>
<g><text x="527.0" y="242.9" font-size="9" fill="none" text-anchor="middle" style="letter-spacing:-0.2px" stroke="rgba(255,255,255,0.5)" stroke-width="2">Evans Halshaw</text><text x="527.0" y="242.9" font-size="9" fill="#6b625b" text-anchor="middle" style="letter-spacing:-0.2px" stroke="#6b625b" stroke-width="0.3">Evans Halshaw</text></g>
<g fill="#6e5646"><rect x="522.5" y="227.0" width="9" height="4" rx="1"/><path d="M523.5 227.0 L524.5 224.0 H529.5 L530.5 227.0Z"/></g>
<g><text x="516.0" y="379.2" font-size="9" fill="none" text-anchor="middle" style="letter-spacing:-0.2px" stroke="rgba(255,255,255,0.5)" stroke-width="2">Speed Expert</text><text x="516.0" y="379.2" font-size="9" fill="#6b625b" text-anchor="middle" style="letter-spacing:-0.2px" stroke="#6b625b" stroke-width="0.3">Speed Expert</text></g>
<g fill="#6e5646"><path d="M511.0 363.0 H521.0 L519.5 368.0 H512.5Z"/><path d="M513.0 363.0 Q516.0 358.0 519.0 363.0" fill="none" stroke="#6e5646" stroke-width="1"/></g>
<g><text x="536.4" y="577.8" font-size="9" fill="none" text-anchor="middle" style="letter-spacing:-0.2px" stroke="rgba(255,255,255,0.5)" stroke-width="2">Stratstone Land Rover</text><text x="536.4" y="577.8" font-size="9" fill="#6b625b" text-anchor="middle" style="letter-spacing:-0.2px" stroke="#6b625b" stroke-width="0.3">Stratstone Land Rover</text></g>
<g fill="#6e5646"><rect x="531.9" y="560.7" width="9" height="4" rx="1"/><path d="M532.9 560.7 L533.9 557.7 H538.9 L539.9 560.7Z"/></g>
<g><text x="643.6" y="574.4" font-size="9" fill="none" text-anchor="middle" style="letter-spacing:-0.2px" stroke="rgba(255,255,255,0.5)" stroke-width="2">Days Rental</text><text x="643.6" y="574.4" font-size="9" fill="#6b625b" text-anchor="middle" style="letter-spacing:-0.2px" stroke="#6b625b" stroke-width="0.3">Days Rental</text></g>
<g fill="#6e5646"><rect x="639.1" y="558.5" width="9" height="4" rx="1"/><path d="M640.1 558.5 L641.1 555.5 H646.1 L647.1 558.5Z"/></g>
<g><text x="787.0" y="509.6" font-size="9" fill="none" text-anchor="middle" style="letter-spacing:-0.2px" stroke="rgba(255,255,255,0.5)" stroke-width="2">Fordthorne</text><text x="787.0" y="509.6" font-size="9" fill="#6b625b" text-anchor="middle" style="letter-spacing:-0.2px" stroke="#6b625b" stroke-width="0.3">Fordthorne</text></g>
<g fill="#6e5646"><rect x="782.5" y="493.0" width="9" height="4" rx="1"/><path d="M783.5 493.0 L784.5 490.0 H789.5 L790.5 493.0Z"/></g>
<g><text x="756.0" y="549.2" font-size="9" fill="none" text-anchor="middle" style="letter-spacing:-0.2px" stroke="rgba(255,255,255,0.5)" stroke-width="2">Sytner BMW</text><text x="756.0" y="549.2" font-size="9" fill="#6b625b" text-anchor="middle" style="letter-spacing:-0.2px" stroke="#6b625b" stroke-width="0.3">Sytner BMW</text></g>
<g fill="#6e5646"><rect x="751.5" y="532.5" width="9" height="4" rx="1"/><path d="M752.5 532.5 L753.5 529.5 H758.5 L759.5 532.5Z"/></g>
<g><text x="891.7" y="555.2" font-size="9" fill="none" text-anchor="middle" style="letter-spacing:-0.2px" stroke="rgba(255,255,255,0.5)" stroke-width="2">Ty Rosa</text><text x="891.7" y="555.2" font-size="9" fill="#6b625b" text-anchor="middle" style="letter-spacing:-0.2px" stroke="#6b625b" stroke-width="0.3">Ty Rosa</text></g>
<g fill="#6e5646"><rect x="886.7" y="536.0" width="1.5" height="8"/><rect x="886.7" y="540.0" width="10" height="2"/><rect x="889.7" y="538.0" width="7" height="2"/></g>
<g><text x="846.0" y="689.5" font-size="9" fill="none" text-anchor="middle" style="letter-spacing:-0.2px" stroke="rgba(255,255,255,0.5)" stroke-width="2">IKEA</text><text x="846.0" y="689.5" font-size="9" fill="#6b625b" text-anchor="middle" style="letter-spacing:-0.2px" stroke="#6b625b" stroke-width="0.3">IKEA</text></g>
<g fill="#6e5646"><path d="M842.0 674.8 L844.0 669.8 H848.0 L850.0 674.8Z"/><rect x="845.4" y="674.8" width="1.2" height="3"/><rect x="843.5" y="677.8" width="5" height="1.2"/></g>
<g><text x="831.0" y="53.2" font-size="9" fill="none" text-anchor="middle" style="letter-spacing:-0.2px" stroke="rgba(255,255,255,0.5)" stroke-width="2">Mas &amp; Co</text><text x="831.0" y="53.2" font-size="9" fill="#6b625b" text-anchor="middle" style="letter-spacing:-0.2px" stroke="#6b625b" stroke-width="0.3">Mas &amp; Co</text></g>
<g fill="#6e5646"><path d="M826.0 37.8 H836.0 L834.5 42.8 H827.5Z"/><path d="M828.0 37.8 Q831.0 32.8 834.0 37.8" fill="none" stroke="#6e5646" stroke-width="1"/></g>
<g><text x="865.0" y="122.8" font-size="9" fill="none" text-anchor="middle" style="letter-spacing:-0.2px" stroke="rgba(255,255,255,0.5)" stroke-width="2">Shop 'N' Save</text><text x="865.0" y="122.8" font-size="9" fill="#6b625b" text-anchor="middle" style="letter-spacing:-0.2px" stroke="#6b625b" stroke-width="0.3">Shop 'N' Save</text></g>
<g fill="#6e5646"><path d="M860.0 107.0 H870.0 L868.5 112.0 H861.5Z"/><path d="M862.0 107.0 Q865.0 102.0 868.0 107.0" fill="none" stroke="#6e5646" stroke-width="1"/></g>
<g><text x="724.0" y="219.8" font-size="9" fill="none" text-anchor="middle" style="letter-spacing:-0.2px" stroke="rgba(255,255,255,0.5)" stroke-width="2">Masala Bazaar</text><text x="724.0" y="219.8" font-size="9" fill="#6b625b" text-anchor="middle" style="letter-spacing:-0.2px" stroke="#6b625b" stroke-width="0.3">Masala Bazaar</text></g>
<g fill="#6e5646"><path d="M719.0 203.7 H729.0 L727.5 208.7 H720.5Z"/><path d="M721.0 203.7 Q724.0 198.7 727.0 203.7" fill="none" stroke="#6e5646" stroke-width="1"/></g>
<g><text x="1019.0" y="450.2" font-size="9" fill="none" text-anchor="middle" style="letter-spacing:-0.2px" stroke="rgba(255,255,255,0.5)" stroke-width="2">Saint Patrick's</text><text x="1019.0" y="450.2" font-size="9" fill="#6b625b" text-anchor="middle" style="letter-spacing:-0.2px" stroke="#6b625b" stroke-width="0.3">Saint Patrick's</text></g>
<g fill="#6e4a36"><rect x="1018.1" y="428.0" width="1.8" height="12"/><rect x="1015.5" y="431.0" width="7" height="1.8"/></g>
<g><text x="1019.0" y="460.9" font-size="9" fill="none" text-anchor="middle" style="letter-spacing:-0.2px" stroke="rgba(255,255,255,0.5)" stroke-width="2">Grangetown Church</text><text x="1019.0" y="460.9" font-size="9" fill="#6b625b" text-anchor="middle" style="letter-spacing:-0.2px" stroke="#6b625b" stroke-width="0.3">Grangetown Church</text></g>
<g><text x="991.6" y="499.9" font-size="9" fill="none" text-anchor="middle" style="letter-spacing:-0.2px" stroke="rgba(255,255,255,0.5)" stroke-width="2">Saint Paul's Church</text><text x="991.6" y="499.9" font-size="9" fill="#6b625b" text-anchor="middle" style="letter-spacing:-0.2px" stroke="#6b625b" stroke-width="0.3">Saint Paul's Church</text></g>
<g fill="#6e4a36"><rect x="990.7" y="478.0" width="1.8" height="12"/><rect x="988.1" y="481.0" width="7" height="1.8"/></g>
<g><text x="1098.8" y="400.2" font-size="9" fill="none" text-anchor="middle" style="letter-spacing:-0.2px" stroke="rgba(255,255,255,0.5)" stroke-width="2">Nextbike – Bargoed Street</text><text x="1098.8" y="400.2" font-size="9" fill="#6b625b" text-anchor="middle" style="letter-spacing:-0.2px" stroke="#6b625b" stroke-width="0.3">Nextbike – Bargoed Street</text></g>
<g fill="none" stroke="#6e5646" stroke-width="1"><circle cx="1095.8" cy="386.6" r="2.5"/><circle cx="1101.8" cy="386.6" r="2.5"/><path d="M1095.8 386.6 L1097.8 382.6 H1100.8 L1101.8 386.6"/></g>
<g><text x="1098.8" y="410.7" font-size="9" fill="none" text-anchor="middle" style="letter-spacing:-0.2px" stroke="rgba(255,255,255,0.5)" stroke-width="2">– Corporation Road</text><text x="1098.8" y="410.7" font-size="9" fill="#6b625b" text-anchor="middle" style="letter-spacing:-0.2px" stroke="#6b625b" stroke-width="0.3">– Corporation Road</text></g>
<g><text x="812.0" y="166.2" font-size="9" fill="none" text-anchor="middle" style="letter-spacing:-0.2px" stroke="rgba(255,255,255,0.5)" stroke-width="2">The Cornwall</text><text x="812.0" y="166.2" font-size="9" fill="#d9733a" text-anchor="middle" style="letter-spacing:-0.2px" stroke="#d9733a" stroke-width="0.3">The Cornwall</text></g>
<g fill="#d9733a"><rect x="808.5" y="145" width="7" height="10" rx="2"/></g><rect x="810" y="147" width="4" height="4" fill="#f3d2bb"/>
<g><text x="1015.4" y="213.2" font-size="9" fill="none" text-anchor="middle" style="letter-spacing:-0.2px" stroke="rgba(255,255,255,0.5)" stroke-width="2">Vegetarian Food Studio</text><text x="1015.4" y="213.2" font-size="9" fill="#d9733a" text-anchor="middle" style="letter-spacing:-0.2px" stroke="#d9733a" stroke-width="0.3">Vegetarian Food Studio</text></g>
<g fill="#d9733a"><rect x="1012" y="192" width="1.2" height="11"/><rect x="1017" y="192" width="1.5" height="11"/><rect x="1010.8" y="192" width="3.6" height="4"/></g>
<g><text x="1008.7" y="142.2" font-size="9" fill="none" text-anchor="middle" style="letter-spacing:-0.2px" stroke="rgba(255,255,255,0.5)" stroke-width="2">Pentre Gardens</text><text x="1008.7" y="142.2" font-size="9" fill="#4f9a47" text-anchor="middle" style="letter-spacing:-0.2px" stroke="#4f9a47" stroke-width="0.3">Pentre Gardens</text></g>
<g fill="#4f9a47"><circle cx="1008" cy="125" r="4"/><rect x="1007.3" y="126" width="1.4" height="6"/></g>
<g><text x="949.2" y="827.2" font-size="9" fill="none" text-anchor="middle" style="letter-spacing:-0.2px" stroke="rgba(255,255,255,0.5)" stroke-width="2">Ferry Road Park</text><text x="949.2" y="827.2" font-size="9" fill="#4f9a47" text-anchor="middle" style="letter-spacing:-0.2px" stroke="#4f9a47" stroke-width="0.3">Ferry Road Park</text></g>
<g fill="#4f9a47"><circle cx="949.2" cy="810" r="4"/><rect x="948.5" y="811" width="1.4" height="6"/></g>
<g><text x="650.0" y="323.2" font-size="9" fill="none" text-anchor="middle" style="letter-spacing:-0.2px" stroke="rgba(255,255,255,0.5)" stroke-width="2">Ninian Park School</text><text x="650.0" y="323.2" font-size="9" fill="#8c7d1e" text-anchor="middle" style="letter-spacing:-0.2px" stroke="#8c7d1e" stroke-width="0.3">Ninian Park School</text></g>
<g fill="#b39b10"><rect x="646.0" y="302.0" width="2.2" height="10"/><rect x="650.0" y="302.0" width="3.5" height="10"/></g>
<g><text x="845.8" y="283.2" font-size="9" fill="none" text-anchor="middle" style="letter-spacing:-0.2px" stroke="rgba(255,255,255,0.5)" stroke-width="2">St Patrick's R.C.</text><text x="845.8" y="283.2" font-size="9" fill="#8c7d1e" text-anchor="middle" style="letter-spacing:-0.2px" stroke="#8c7d1e" stroke-width="0.3">St Patrick's R.C.</text></g>
<g><text x="845.8" y="293.7" font-size="9" fill="none" text-anchor="middle" style="letter-spacing:-0.2px" stroke="rgba(255,255,255,0.5)" stroke-width="2">Primary School</text><text x="845.8" y="293.7" font-size="9" fill="#8c7d1e" text-anchor="middle" style="letter-spacing:-0.2px" stroke="#8c7d1e" stroke-width="0.3">Primary School</text></g>
<g fill="#b39b10"><rect x="841.8" y="261.7" width="2.2" height="10"/><rect x="845.8" y="261.7" width="3.5" height="10"/></g>
<g><text x="1145.0" y="652.2" font-size="9" fill="none" text-anchor="middle" style="letter-spacing:-0.2px" stroke="rgba(255,255,255,0.5)" stroke-width="2">Grangetown</text><text x="1145.0" y="652.2" font-size="9" fill="#8c7d1e" text-anchor="middle" style="letter-spacing:-0.2px" stroke="#8c7d1e" stroke-width="0.3">Grangetown</text></g>
<g><text x="1145.0" y="662.7" font-size="9" fill="none" text-anchor="middle" style="letter-spacing:-0.2px" stroke="rgba(255,255,255,0.5)" stroke-width="2">Nursery School</text><text x="1145.0" y="662.7" font-size="9" fill="#8c7d1e" text-anchor="middle" style="letter-spacing:-0.2px" stroke="#8c7d1e" stroke-width="0.3">Nursery School</text></g>
<g fill="#b39b10"><rect x="1141.0" y="632.0" width="2.2" height="10"/><rect x="1145.0" y="632.0" width="3.5" height="10"/></g>
<g><text x="1182.0" y="14.9" font-size="9" fill="none" text-anchor="middle" style="letter-spacing:-0.2px" stroke="rgba(255,255,255,0.5)" stroke-width="2">Cardiff Riverside</text><text x="1182.0" y="14.9" font-size="9" fill="#5a6ec4" text-anchor="middle" style="letter-spacing:-0.2px" stroke="#5a6ec4" stroke-width="0.3">Cardiff Riverside</text></g>
<g><text x="1183.0" y="25.2" font-size="9" fill="none" text-anchor="middle" style="letter-spacing:-0.2px" stroke="rgba(255,255,255,0.5)" stroke-width="2">Station</text><text x="1183.0" y="25.2" font-size="9" fill="#5a6ec4" text-anchor="middle" style="letter-spacing:-0.2px" stroke="#5a6ec4" stroke-width="0.3">Station</text></g>
<rect x="1177" y="-5" width="10" height="9" rx="1.5" fill="#5a6ec4"/>
<rect x="1063" y="-2" width="10" height="10" rx="1.5" fill="#5a6ec4"/>
<polyline points="1175,701 1198,701" stroke="#e8eef2" stroke-width="2"/><polyline points="1179,688 1180,737" stroke="#e8eef2" stroke-width="2"/>
<rect x="1175" y="714" width="10" height="11" rx="1.5" fill="#5a6ec4" stroke="#fff" stroke-width="0.8"/><path d="M1177 721 H1183 L1182 723 H1178Z M1178.5 717 H1181.5 V720 H1178.5Z" fill="#fff"/>
<g><text x="822.0" y="439.2" font-size="9" fill="none" text-anchor="middle" style="letter-spacing:-0.2px" stroke="rgba(255,255,255,0.5)" stroke-width="2">Grangetown</text><text x="822.0" y="439.2" font-size="9" fill="#5a6ec4" text-anchor="middle" style="letter-spacing:-0.2px" stroke="#5a6ec4" stroke-width="0.3">Grangetown</text></g>
<g><text x="1087.4" y="52.2" font-size="9" fill="none" text-anchor="middle" style="font-style:italic" stroke="rgba(255,255,255,0.5)" stroke-width="2">River Taff</text><text x="1087.4" y="52.2" font-size="9" fill="#4a78b8" text-anchor="middle" style="font-style:italic" stroke="#4a78b8" stroke-width="0.3">River Taff</text></g>
<g transform="rotate(80 1095.0 111.7)"><text x="1095.0" y="114.9" font-size="9" fill="none" text-anchor="middle" style="font-style:italic" stroke="rgba(255,255,255,0.5)" stroke-width="2">River Taff</text><text x="1095.0" y="114.9" font-size="9" fill="#4a78b8" text-anchor="middle" style="font-style:italic" stroke="#4a78b8" stroke-width="0.3">River Taff</text></g>
<g><text x="1205.0" y="678.8" font-size="13.5" fill="none" text-anchor="start" style="font-style:italic;letter-spacing:-0.3px" stroke="rgba(255,255,255,0.5)" stroke-width="2">River Taff</text><text x="1205.0" y="678.8" font-size="13.5" fill="#4a78b8" text-anchor="start" style="font-style:italic;letter-spacing:-0.3px" stroke="#4a78b8" stroke-width="0.3">River Taff</text></g>
<g><text x="525.0" y="11.2" font-size="9" fill="none" text-anchor="middle" style="letter-spacing:-0.2px" stroke="rgba(255,255,255,0.5)" stroke-width="2"></text><text x="525.0" y="11.2" font-size="9" fill="#4a78b8" text-anchor="middle" style="letter-spacing:-0.2px" stroke="#4a78b8" stroke-width="0.3"></text></g>
<g transform="rotate(40 775.8 56.4)"><text x="775.8" y="59.6" font-size="9" fill="none" text-anchor="middle" style="letter-spacing:-0.2px" stroke="rgba(255,255,255,0.5)" stroke-width="2">Compton St</text><text x="775.8" y="59.6" font-size="9" fill="#4f4f4f" text-anchor="middle" style="letter-spacing:-0.2px" stroke="#4f4f4f" stroke-width="0.3">Compton St</text></g>
<g transform="rotate(40 764.5 81.0)"><text x="764.5" y="84.2" font-size="9" fill="none" text-anchor="middle" style="letter-spacing:-0.2px" stroke="rgba(255,255,255,0.5)" stroke-width="2">Somerset St</text><text x="764.5" y="84.2" font-size="9" fill="#4f4f4f" text-anchor="middle" style="letter-spacing:-0.2px" stroke="#4f4f4f" stroke-width="0.3">Somerset St</text></g>
<g transform="rotate(40 754.0 106.0)"><text x="754.0" y="109.2" font-size="9" fill="none" text-anchor="middle" style="letter-spacing:-0.2px" stroke="rgba(255,255,255,0.5)" stroke-width="2">Hereford St</text><text x="754.0" y="109.2" font-size="9" fill="#4f4f4f" text-anchor="middle" style="letter-spacing:-0.2px" stroke="#4f4f4f" stroke-width="0.3">Hereford St</text></g>
<g transform="rotate(-55 822.0 106.0)"><text x="822.0" y="109.2" font-size="9" fill="none" text-anchor="middle" style="letter-spacing:-0.2px" stroke="rgba(255,255,255,0.5)" stroke-width="2">Rutland St</text><text x="822.0" y="109.2" font-size="9" fill="#4f4f4f" text-anchor="middle" style="letter-spacing:-0.2px" stroke="#4f4f4f" stroke-width="0.3">Rutland St</text></g>
<g transform="rotate(62 738.5 151.0)"><text x="738.5" y="154.2" font-size="9" fill="none" text-anchor="middle" style="letter-spacing:-0.2px" stroke="rgba(255,255,255,0.5)" stroke-width="2">Wedmore Rd</text><text x="738.5" y="154.2" font-size="9" fill="#4f4f4f" text-anchor="middle" style="letter-spacing:-0.2px" stroke="#4f4f4f" stroke-width="0.3">Wedmore Rd</text></g>
<g transform="rotate(42 853.7 162.5)"><text x="853.7" y="165.7" font-size="9" fill="none" text-anchor="middle" style="letter-spacing:-0.2px" stroke="rgba(255,255,255,0.5)" stroke-width="2">Warwick St</text><text x="853.7" y="165.7" font-size="9" fill="#4f4f4f" text-anchor="middle" style="letter-spacing:-0.2px" stroke="#4f4f4f" stroke-width="0.3">Warwick St</text></g>
<g transform="rotate(42 843.5 187.0)"><text x="843.5" y="190.2" font-size="9" fill="none" text-anchor="middle" style="letter-spacing:-0.2px" stroke="rgba(255,255,255,0.5)" stroke-width="2">Dorset St</text><text x="843.5" y="190.2" font-size="9" fill="#4f4f4f" text-anchor="middle" style="letter-spacing:-0.2px" stroke="#4f4f4f" stroke-width="0.3">Dorset St</text></g>
<g transform="rotate(65 813.0 187.0)"><text x="813.0" y="190.2" font-size="9" fill="none" text-anchor="middle" style="letter-spacing:-0.2px" stroke="rgba(255,255,255,0.5)" stroke-width="2">Devon St</text><text x="813.0" y="190.2" font-size="9" fill="#4f4f4f" text-anchor="middle" style="letter-spacing:-0.2px" stroke="#4f4f4f" stroke-width="0.3">Devon St</text></g>
<g transform="rotate(65 801.7 223.9)"><text x="801.7" y="227.1" font-size="9" fill="none" text-anchor="middle" style="letter-spacing:-0.2px" stroke="rgba(255,255,255,0.5)" stroke-width="2">N Clive St</text><text x="801.7" y="227.1" font-size="9" fill="#4f4f4f" text-anchor="middle" style="letter-spacing:-0.2px" stroke="#4f4f4f" stroke-width="0.3">N Clive St</text></g>
<g transform="rotate(-35 515.0 93.0)"><text x="515.0" y="96.2" font-size="9" fill="none" text-anchor="middle" style="letter-spacing:-0.2px" stroke="rgba(255,255,255,0.5)" stroke-width="2">Newton Rd</text><text x="515.0" y="96.2" font-size="9" fill="#4f4f4f" text-anchor="middle" style="letter-spacing:-0.2px" stroke="#4f4f4f" stroke-width="0.3">Newton Rd</text></g>
<g transform="rotate(58 655.0 150.0)"><text x="655.0" y="153.2" font-size="9" fill="none" text-anchor="middle" style="letter-spacing:-0.2px" stroke="rgba(255,255,255,0.5)" stroke-width="2">Powderham Dr</text><text x="655.0" y="153.2" font-size="9" fill="#4f4f4f" text-anchor="middle" style="letter-spacing:-0.2px" stroke="#4f4f4f" stroke-width="0.3">Powderham Dr</text></g>
<g transform="rotate(-35 644.7 275.8)"><text x="644.7" y="279.0" font-size="9" fill="none" text-anchor="middle" style="letter-spacing:-0.2px" stroke="rgba(255,255,255,0.5)" stroke-width="2">Virgil St</text><text x="644.7" y="279.0" font-size="9" fill="#4f4f4f" text-anchor="middle" style="letter-spacing:-0.2px" stroke="#4f4f4f" stroke-width="0.3">Virgil St</text></g>
<g transform="rotate(82 987.0 77.0)"><text x="987.0" y="80.2" font-size="9" fill="none" text-anchor="middle" style="letter-spacing:-0.2px" stroke="rgba(255,255,255,0.5)" stroke-width="2">Dinas St</text><text x="987.0" y="80.2" font-size="9" fill="#4f4f4f" text-anchor="middle" style="letter-spacing:-0.2px" stroke="#4f4f4f" stroke-width="0.3">Dinas St</text></g>
<g transform="rotate(82 1023.0 71.0)"><text x="1023.0" y="74.2" font-size="9" fill="none" text-anchor="middle" style="letter-spacing:-0.2px" stroke="rgba(255,255,255,0.5)" stroke-width="2">Hafod St</text><text x="1023.0" y="74.2" font-size="9" fill="#4f4f4f" text-anchor="middle" style="letter-spacing:-0.2px" stroke="#4f4f4f" stroke-width="0.3">Hafod St</text></g>
<g transform="rotate(82 958.0 145.6)"><text x="958.0" y="148.8" font-size="9" fill="none" text-anchor="middle" style="letter-spacing:-0.2px" stroke="rgba(255,255,255,0.5)" stroke-width="2">Mardy St</text><text x="958.0" y="148.8" font-size="9" fill="#4f4f4f" text-anchor="middle" style="letter-spacing:-0.2px" stroke="#4f4f4f" stroke-width="0.3">Mardy St</text></g>
<g transform="rotate(80 929.7 219.0)"><text x="929.7" y="222.2" font-size="9" fill="none" text-anchor="middle" style="letter-spacing:-0.2px" stroke="rgba(255,255,255,0.5)" stroke-width="2">Clare Rd</text><text x="929.7" y="222.2" font-size="9" fill="#4f4f4f" text-anchor="middle" style="letter-spacing:-0.2px" stroke="#4f4f4f" stroke-width="0.3">Clare Rd</text></g>
<g transform="rotate(-50 1007.5 251.0)"><text x="1007.5" y="254.2" font-size="9" fill="none" text-anchor="middle" style="letter-spacing:-0.2px" stroke="rgba(255,255,255,0.5)" stroke-width="2">Ferndale St</text><text x="1007.5" y="254.2" font-size="9" fill="#4f4f4f" text-anchor="middle" style="letter-spacing:-0.2px" stroke="#4f4f4f" stroke-width="0.3">Ferndale St</text></g>
<g transform="rotate(-50 1034.6 273.5)"><text x="1034.6" y="276.7" font-size="9" fill="none" text-anchor="middle" style="letter-spacing:-0.2px" stroke="rgba(255,255,255,0.5)" stroke-width="2">Coedcae St</text><text x="1034.6" y="276.7" font-size="9" fill="#4f4f4f" text-anchor="middle" style="letter-spacing:-0.2px" stroke="#4f4f4f" stroke-width="0.3">Coedcae St</text></g>
<g transform="rotate(-50 1051.6 300.6)"><text x="1051.6" y="303.8" font-size="9" fill="none" text-anchor="middle" style="letter-spacing:-0.2px" stroke="rgba(255,255,255,0.5)" stroke-width="2">Cymmer St</text><text x="1051.6" y="303.8" font-size="9" fill="#4f4f4f" text-anchor="middle" style="letter-spacing:-0.2px" stroke="#4f4f4f" stroke-width="0.3">Cymmer St</text></g>
<g transform="rotate(-20 898.0 354.8)"><text x="898.0" y="358.0" font-size="9" fill="none" text-anchor="middle" style="letter-spacing:-0.2px" stroke="rgba(255,255,255,0.5)" stroke-width="2">Redlaver St</text><text x="898.0" y="358.0" font-size="9" fill="#4f4f4f" text-anchor="middle" style="letter-spacing:-0.2px" stroke="#4f4f4f" stroke-width="0.3">Redlaver St</text></g>
<g transform="rotate(50 877.0 325.4)"><text x="877.0" y="328.6" font-size="9" fill="none" text-anchor="middle" style="letter-spacing:-0.2px" stroke="rgba(255,255,255,0.5)" stroke-width="2">North St</text><text x="877.0" y="328.6" font-size="9" fill="#4f4f4f" text-anchor="middle" style="letter-spacing:-0.2px" stroke="#4f4f4f" stroke-width="0.3">North St</text></g>
<g transform="rotate(-90 1070.7 194.0)"><text x="1070.7" y="197.2" font-size="9" fill="none" text-anchor="middle" style="letter-spacing:-0.2px" stroke="rgba(255,255,255,0.5)" stroke-width="2">Taff Embankment</text><text x="1070.7" y="197.2" font-size="9" fill="#4f4f4f" text-anchor="middle" style="letter-spacing:-0.2px" stroke="#4f4f4f" stroke-width="0.3">Taff Embankment</text></g>
<g transform="rotate(42 1132.5 345.8)"><text x="1132.5" y="349.0" font-size="9" fill="none" text-anchor="middle" style="letter-spacing:-0.2px" stroke="rgba(255,255,255,0.5)" stroke-width="2">Taff Embankment</text><text x="1132.5" y="349.0" font-size="9" fill="#4f4f4f" text-anchor="middle" style="letter-spacing:-0.2px" stroke="#4f4f4f" stroke-width="0.3">Taff Embankment</text></g>
<g transform="rotate(72 1208.0 123.0)"><text x="1208.0" y="126.2" font-size="9" fill="none" text-anchor="middle" style="letter-spacing:-0.2px" stroke="rgba(255,255,255,0.5)" stroke-width="2">Trade St</text><text x="1208.0" y="126.2" font-size="9" fill="#4f4f4f" text-anchor="middle" style="letter-spacing:-0.2px" stroke="#4f4f4f" stroke-width="0.3">Trade St</text></g>
<g transform="rotate(70 862.7 500.8)"><text x="862.7" y="504.0" font-size="9" fill="none" text-anchor="middle" style="letter-spacing:-0.2px" stroke="rgba(255,255,255,0.5)" stroke-width="2">Clive Ln</text><text x="862.7" y="504.0" font-size="9" fill="#4f4f4f" text-anchor="middle" style="letter-spacing:-0.2px" stroke="#4f4f4f" stroke-width="0.3">Clive Ln</text></g>
<g transform="rotate(70 887.0 487.0)"><text x="887.0" y="490.2" font-size="9" fill="none" text-anchor="middle" style="letter-spacing:-0.2px" stroke="rgba(255,255,255,0.5)" stroke-width="2">Clive St</text><text x="887.0" y="490.2" font-size="9" fill="#4f4f4f" text-anchor="middle" style="letter-spacing:-0.2px" stroke="#4f4f4f" stroke-width="0.3">Clive St</text></g>
<g transform="rotate(70 916.4 592.6)"><text x="916.4" y="595.8" font-size="9" fill="none" text-anchor="middle" style="letter-spacing:-0.2px" stroke="rgba(255,255,255,0.5)" stroke-width="2">Clive St</text><text x="916.4" y="595.8" font-size="9" fill="#4f4f4f" text-anchor="middle" style="letter-spacing:-0.2px" stroke="#4f4f4f" stroke-width="0.3">Clive St</text></g>
<g transform="rotate(22 1126.0 461.0)"><text x="1126.0" y="464.2" font-size="9" fill="none" text-anchor="middle" style="letter-spacing:-0.2px" stroke="rgba(255,255,255,0.5)" stroke-width="2">Grange Pl</text><text x="1126.0" y="464.2" font-size="9" fill="#4f4f4f" text-anchor="middle" style="letter-spacing:-0.2px" stroke="#4f4f4f" stroke-width="0.3">Grange Pl</text></g>
<g transform="rotate(22 1106.7 489.5)"><text x="1106.7" y="492.7" font-size="9" fill="none" text-anchor="middle" style="letter-spacing:-0.2px" stroke="rgba(255,255,255,0.5)" stroke-width="2">Newport St</text><text x="1106.7" y="492.7" font-size="9" fill="#4f4f4f" text-anchor="middle" style="letter-spacing:-0.2px" stroke="#4f4f4f" stroke-width="0.3">Newport St</text></g>
<g transform="rotate(22 1095.4 517.7)"><text x="1095.4" y="520.9" font-size="9" fill="none" text-anchor="middle" style="letter-spacing:-0.2px" stroke="rgba(255,255,255,0.5)" stroke-width="2">Bradford St</text><text x="1095.4" y="520.9" font-size="9" fill="#4f4f4f" text-anchor="middle" style="letter-spacing:-0.2px" stroke="#4f4f4f" stroke-width="0.3">Bradford St</text></g>
<g transform="rotate(22 1140.6 541.4)"><text x="1140.6" y="544.6" font-size="9" fill="none" text-anchor="middle" style="letter-spacing:-0.2px" stroke="rgba(255,255,255,0.5)" stroke-width="2">Cosslett Pl</text><text x="1140.6" y="544.6" font-size="9" fill="#4f4f4f" text-anchor="middle" style="letter-spacing:-0.2px" stroke="#4f4f4f" stroke-width="0.3">Cosslett Pl</text></g>
<g transform="rotate(-22 1006.3 524.5)"><text x="1006.3" y="527.7" font-size="9" fill="none" text-anchor="middle" style="letter-spacing:-0.2px" stroke="rgba(255,255,255,0.5)" stroke-width="2">Bromsgrove St</text><text x="1006.3" y="527.7" font-size="9" fill="#4f4f4f" text-anchor="middle" style="letter-spacing:-0.2px" stroke="#4f4f4f" stroke-width="0.3">Bromsgrove St</text></g>
<g transform="rotate(22 1082.0 542.5)"><text x="1082.0" y="545.7" font-size="9" fill="none" text-anchor="middle" style="letter-spacing:-0.2px" stroke="rgba(255,255,255,0.5)" stroke-width="2">Bromfield St</text><text x="1082.0" y="545.7" font-size="9" fill="#4f4f4f" text-anchor="middle" style="letter-spacing:-0.2px" stroke="#4f4f4f" stroke-width="0.3">Bromfield St</text></g>
<g transform="rotate(22 1056.0 562.8)"><text x="1056.0" y="566.0" font-size="9" fill="none" text-anchor="middle" style="letter-spacing:-0.2px" stroke="rgba(255,255,255,0.5)" stroke-width="2">Ludlow St</text><text x="1056.0" y="566.0" font-size="9" fill="#4f4f4f" text-anchor="middle" style="letter-spacing:-0.2px" stroke="#4f4f4f" stroke-width="0.3">Ludlow St</text></g>
<g transform="rotate(22 1216.0 470.3)"><text x="1216.0" y="473.5" font-size="9" fill="none" text-anchor="middle" style="letter-spacing:-0.2px" stroke="rgba(255,255,255,0.5)" stroke-width="2">Corporation</text><text x="1216.0" y="473.5" font-size="9" fill="#4f4f4f" text-anchor="middle" style="letter-spacing:-0.2px" stroke="#4f4f4f" stroke-width="0.3">Corporation</text></g>
<g transform="rotate(28 1180.0 525.6)"><text x="1180.0" y="528.8" font-size="9" fill="none" text-anchor="middle" style="letter-spacing:-0.2px" stroke="rgba(255,255,255,0.5)" stroke-width="2">Moordale Rd</text><text x="1180.0" y="528.8" font-size="9" fill="#4f4f4f" text-anchor="middle" style="letter-spacing:-0.2px" stroke="#4f4f4f" stroke-width="0.3">Moordale Rd</text></g>
<g transform="rotate(28 1092.0 617.4)"><text x="1092.0" y="620.6" font-size="9" fill="none" text-anchor="middle" style="letter-spacing:-0.2px" stroke="rgba(255,255,255,0.5)" stroke-width="2">Kent St</text><text x="1092.0" y="620.6" font-size="9" fill="#4f4f4f" text-anchor="middle" style="letter-spacing:-0.2px" stroke="#4f4f4f" stroke-width="0.3">Kent St</text></g>
<g transform="rotate(35 1043.0 631.0)"><text x="1043.0" y="634.2" font-size="9" fill="none" text-anchor="middle" style="letter-spacing:-0.2px" stroke="rgba(255,255,255,0.5)" stroke-width="2">Amherst St</text><text x="1043.0" y="634.2" font-size="9" fill="#4f4f4f" text-anchor="middle" style="letter-spacing:-0.2px" stroke="#4f4f4f" stroke-width="0.3">Amherst St</text></g>
<g transform="rotate(28 1018.0 661.4)"><text x="1018.0" y="664.6" font-size="9" fill="none" text-anchor="middle" style="letter-spacing:-0.2px" stroke="rgba(255,255,255,0.5)" stroke-width="2">Earl St</text><text x="1018.0" y="664.6" font-size="9" fill="#4f4f4f" text-anchor="middle" style="letter-spacing:-0.2px" stroke="#4f4f4f" stroke-width="0.3">Earl St</text></g>
<g transform="rotate(72 1005.6 737.0)"><text x="1005.6" y="740.2" font-size="9" fill="none" text-anchor="middle" style="letter-spacing:-0.2px" stroke="rgba(255,255,255,0.5)" stroke-width="2">Channel View Rd</text><text x="1005.6" y="740.2" font-size="9" fill="#4f4f4f" text-anchor="middle" style="letter-spacing:-0.2px" stroke="#4f4f4f" stroke-width="0.3">Channel View Rd</text></g>
<g transform="rotate(72 1047.4 857.6)"><text x="1047.4" y="860.8" font-size="9" fill="none" text-anchor="middle" style="letter-spacing:-0.2px" stroke="rgba(255,255,255,0.5)" stroke-width="2">Channel View</text><text x="1047.4" y="860.8" font-size="9" fill="#4f4f4f" text-anchor="middle" style="letter-spacing:-0.2px" stroke="#4f4f4f" stroke-width="0.3">Channel View</text></g>
<g transform="rotate(-62 631.0 697.5)"><text x="631.0" y="700.7" font-size="9" fill="none" text-anchor="middle" style="letter-spacing:-0.2px" stroke="rgba(255,255,255,0.5)" stroke-width="2">Penarth Rd</text><text x="631.0" y="700.7" font-size="9" fill="#4f4f4f" text-anchor="middle" style="letter-spacing:-0.2px" stroke="#4f4f4f" stroke-width="0.3">Penarth Rd</text></g>
<g transform="rotate(65 958.0 878.0)"><text x="958.0" y="881.2" font-size="9" fill="none" text-anchor="middle" style="letter-spacing:-0.2px" stroke="rgba(255,255,255,0.5)" stroke-width="2">Ferry Rd</text><text x="958.0" y="881.2" font-size="9" fill="#4f4f4f" text-anchor="middle" style="letter-spacing:-0.2px" stroke="#4f4f4f" stroke-width="0.3">Ferry Rd</text></g>
<g transform="rotate(28 722.9 626.4)"><text x="722.9" y="629.6" font-size="9" fill="none" text-anchor="middle" style="letter-spacing:-0.2px" stroke="rgba(255,255,255,0.5)" stroke-width="2">Fleet Way</text><text x="722.9" y="629.6" font-size="9" fill="#4f4f4f" text-anchor="middle" style="letter-spacing:-0.2px" stroke="#4f4f4f" stroke-width="0.3">Fleet Way</text></g></svg>
<div style="position:absolute;left:7px;top:4px;width:23px;height:46px;background:#fff;border:1.5px solid #c4c4c4;border-radius:4px;box-sizing:border-box;"></div>
<div style="position:absolute;left:8px;top:27px;width:21px;height:1px;background:#d8d8d8;"></div>
<div style="position:absolute;left:13px;top:15px;width:10px;height:2px;background:#111;"></div>
<div style="position:absolute;left:17px;top:11px;width:2px;height:10px;background:#111;"></div>
<div style="position:absolute;left:13px;top:38px;width:10px;height:2px;background:#111;"></div>
<div style="position:absolute;left:287px;top:398px;width:167px;height:33px;background:#fff;border-radius:11px;box-shadow:0 1px 4px rgba(0,0,0,0.25);"></div>
<svg style="position:absolute;left:362px;top:430px" width="16" height="9"><path d="M0 0 L16 0 L8 8Z" fill="#fff"/></svg>
<div style="position:absolute;left:302px;top:409px;font-size:8.6px;color:#333;white-space:nowrap;line-height:1;letter-spacing:0.12px;">Setting location of your report here</div>
<div style="position:absolute;left:442px;top:400px;font-size:11px;color:#b0b0b0;line-height:1;">×</div>
<svg style="position:absolute;left:636px;top:714px" width="34" height="32" viewBox="0 0 34 32"><ellipse cx="20" cy="22" rx="11" ry="5" transform="rotate(-42 20 22)" fill="rgba(0,0,0,0.28)" filter="url(#blr)"/><defs><filter id="blr" x="-50%" y="-50%" width="200%" height="200%"><feGaussianBlur stdDeviation="2"/></filter></defs><path d="M10 30 C4 20 1 16 1 10.5 A9 9 0 0 1 19 10.5 C19 16 16 20 10 30Z" fill="#2a7fc9"/><circle cx="10" cy="10.5" r="3" fill="#fff"/></svg>
<div style="position:absolute;left:711px;top:873px;width:30px;height:12px;background:rgba(255,255,255,0.8);"></div>
<div style="position:absolute;left:713px;top:874px;font-size:9px;color:#2a6f90;line-height:1;">Leaflet</div>
<div style="position:absolute;left:0;top:885px;width:741px;height:1px;background:#10384f;"></div>
</div>
</body></html>
